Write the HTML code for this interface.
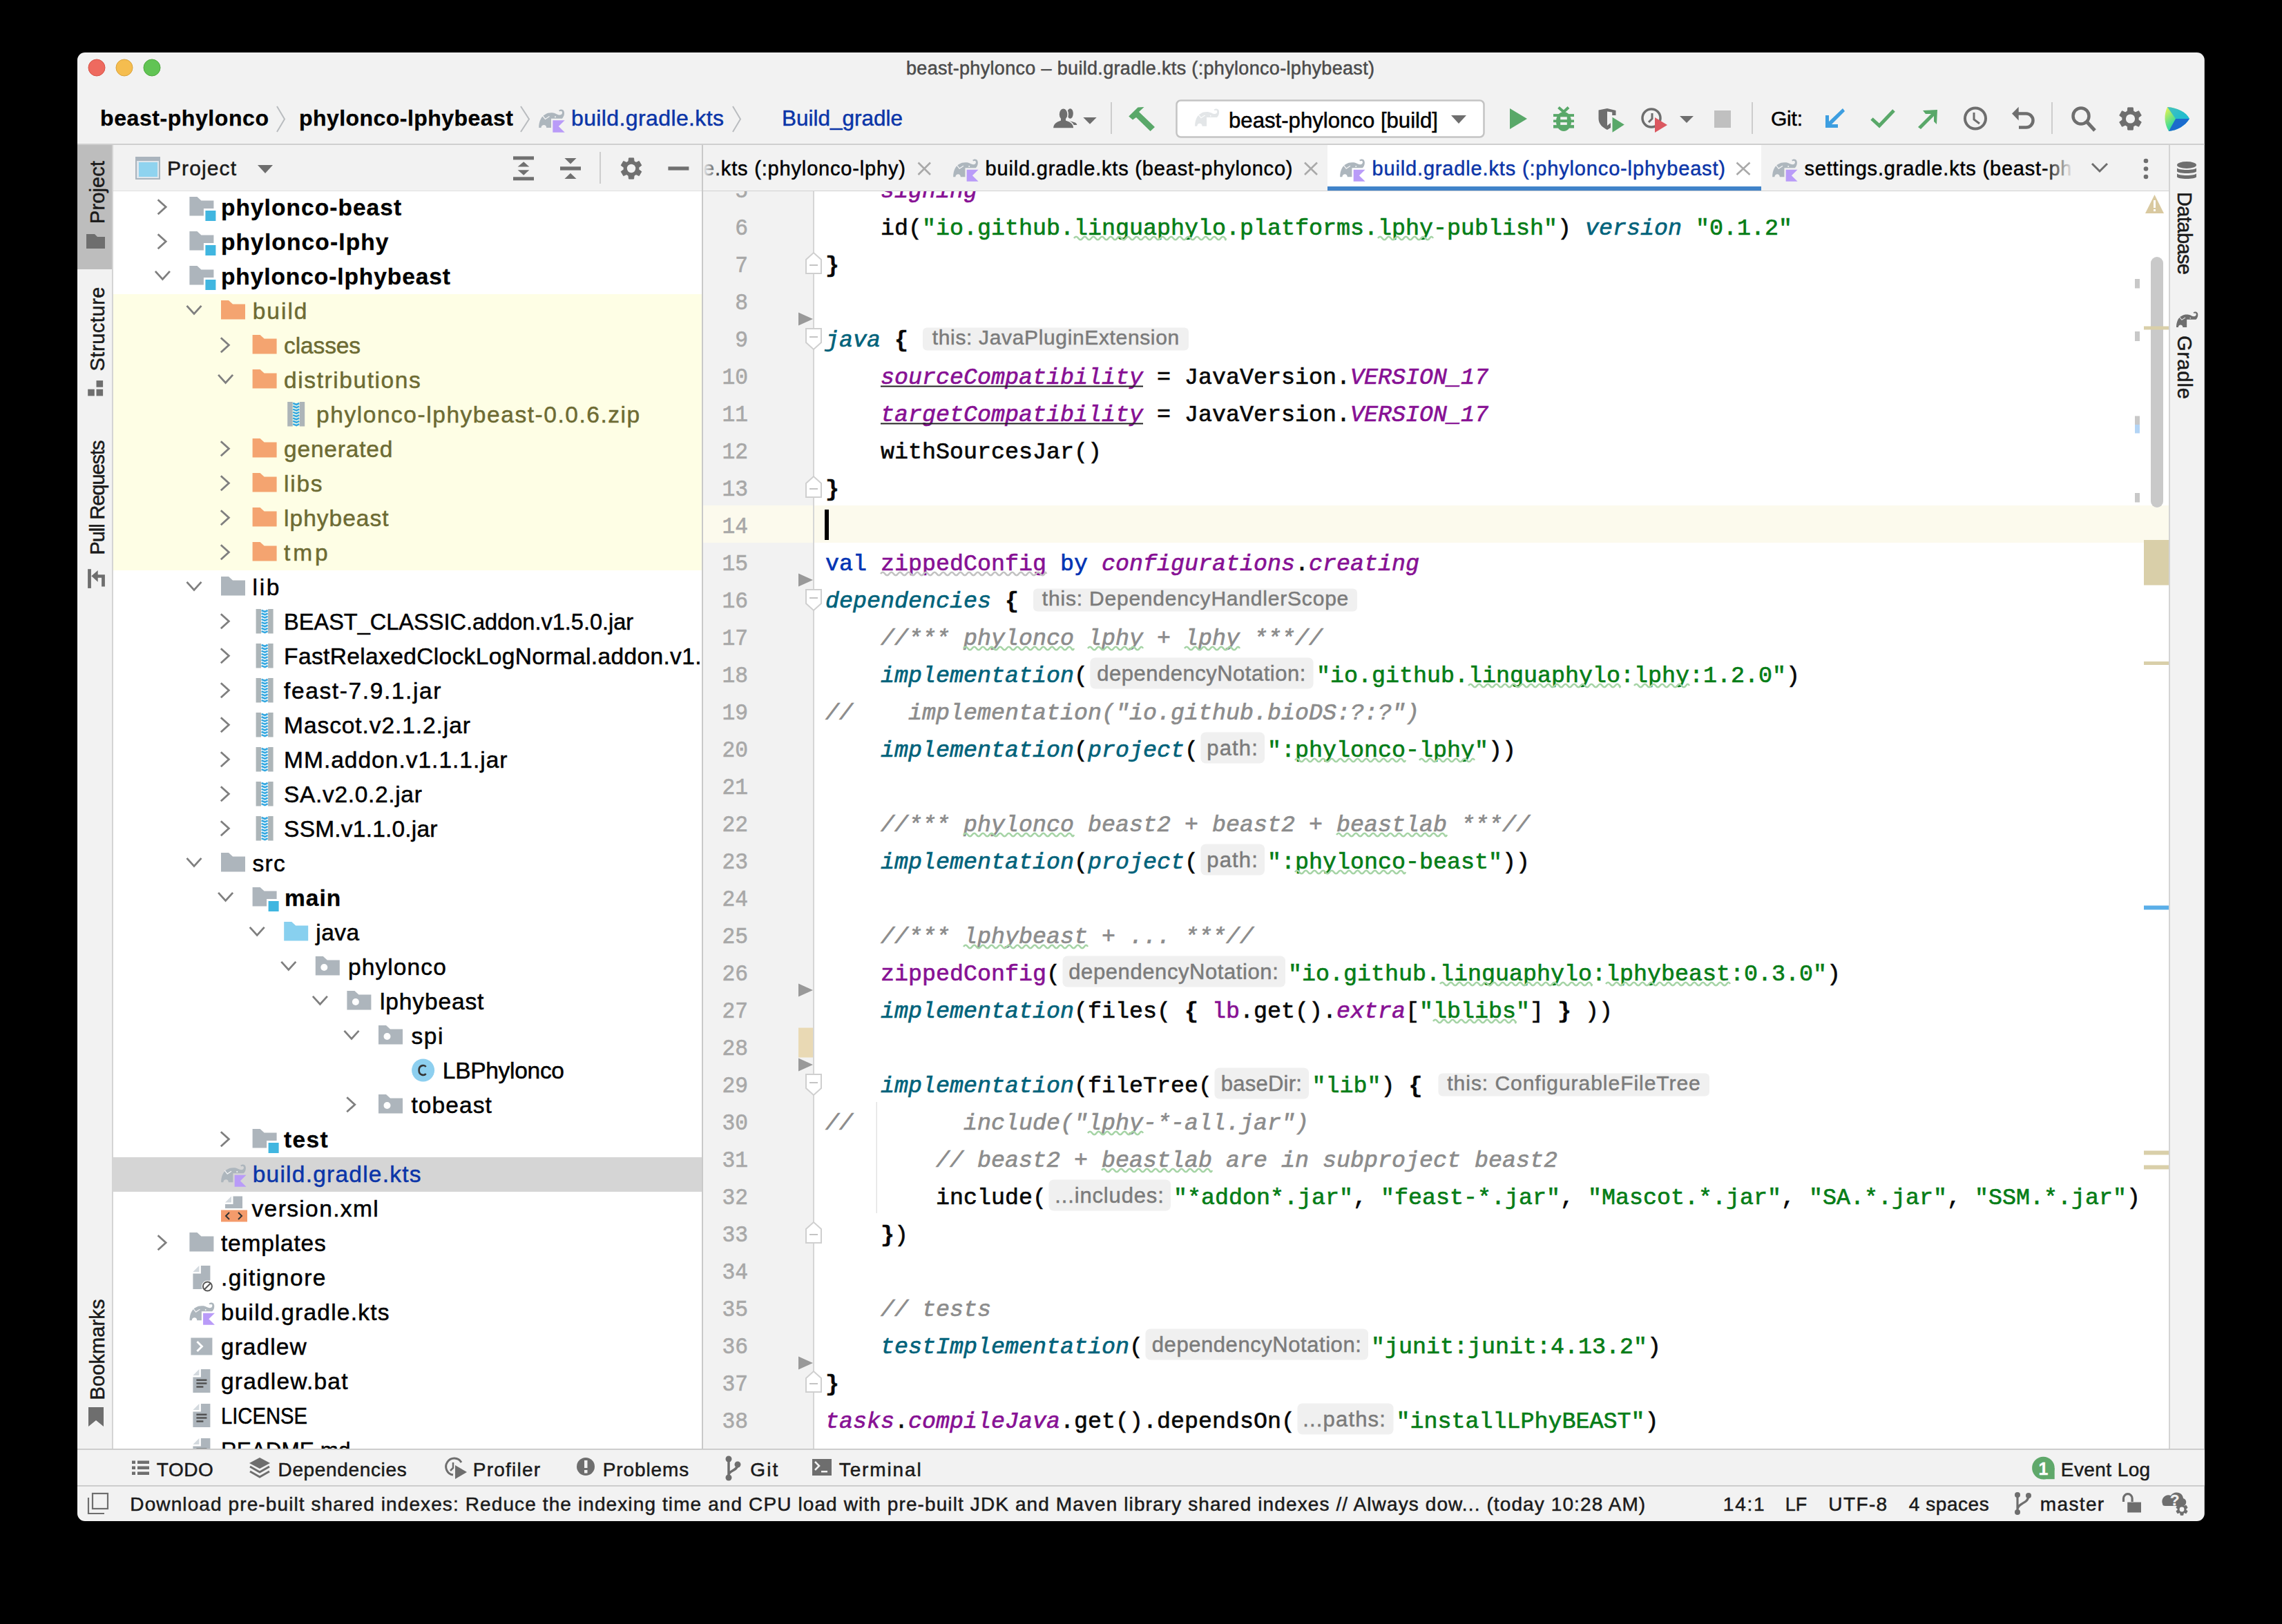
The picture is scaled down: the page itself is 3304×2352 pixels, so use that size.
<!DOCTYPE html><html><head><meta charset="utf-8"><style>html,body{margin:0;padding:0;background:#000;width:3304px;height:2352px;overflow:hidden}svg{display:block}text{white-space:pre}</style></head><body>
<svg width="3304" height="2352" viewBox="0 0 3304 2352">
<defs><clipPath id="win"><rect x="112" y="76" width="3079.8" height="2127" rx="11"/></clipPath><clipPath id="tree"><rect x="164" y="277" width="852" height="1821"/></clipPath><clipPath id="ed"><rect x="1018" y="277" width="2122" height="1821"/></clipPath><clipPath id="tabs"><rect x="1018" y="209" width="2122" height="67"/></clipPath><linearGradient id="fadeL" x1="0" x2="1"><stop offset="0" stop-color="#f2f2f2" stop-opacity="1"/><stop offset="1" stop-color="#f2f2f2" stop-opacity="0"/></linearGradient><linearGradient id="fadeR" x1="0" x2="1"><stop offset="0" stop-color="#f2f2f2" stop-opacity="0"/><stop offset="1" stop-color="#f2f2f2" stop-opacity="1"/></linearGradient></defs>
<rect x="0" y="0" width="3304" height="2352" fill="#000"/>
<g clip-path="url(#win)">
<rect x="112" y="76" width="3080" height="2127" fill="#f2f2f2" />
<circle cx="140" cy="98" r="12" fill="#ee6a5f" stroke="#d65448" stroke-width="1"/>
<circle cx="180" cy="98" r="12" fill="#f5bd4f" stroke="#d9a23b" stroke-width="1"/>
<circle cx="220" cy="98" r="12" fill="#61c454" stroke="#4ea83f" stroke-width="1"/>
<text x="1312" y="108" font-size="27" fill="#4b4b4b" stroke="#4b4b4b" stroke-width="0.5" font-family='"Liberation Sans",sans-serif' textLength="678" lengthAdjust="spacing" >beast-phylonco – build.gradle.kts (:phylonco-lphybeast)</text>
<rect x="112" y="208" width="3080" height="2" fill="#cfcfcf" />
<text x="145" y="181.5" font-size="32" fill="#000" stroke="#000" stroke-width="0.3" font-family='"Liberation Sans",sans-serif' font-weight="bold" textLength="244" lengthAdjust="spacing" >beast-phylonco</text>
<path d="M401,154 L412,172.5 L401,191" stroke="#b9bcbf" stroke-width="2" fill="none"/>
<text x="433" y="181.5" font-size="32" fill="#000" stroke="#000" stroke-width="0.3" font-family='"Liberation Sans",sans-serif' font-weight="bold" textLength="310" lengthAdjust="spacing" >phylonco-lphybeast</text>
<path d="M754,154 L766,172.5 L754,191" stroke="#b9bcbf" stroke-width="2" fill="none"/>
<g transform="translate(779,158) scale(1.0)" opacity="1">
<path d="M1.2,27 C1,18 5,10 10,8 C13,5.5 18,5 22,5.5 C26,6 28,8.5 31,8.5 C34,8.5 35,7 35,5 C35,3 33,2.5 31.5,3.5 L30,2 C32,0 36,-0.3 37.5,3 C39,7 37,12 34.7,13.7 L19,13.7 L19,27 L12.2,27 C12.2,24.5 10.5,23 8.5,23 C6.5,23 4.5,24.5 4.5,27 Z" fill="#adb6bd"/>
<path d="M6.5,9.5 L10.5,14.5 L16.5,10.5" stroke="#fff" stroke-width="1.3" fill="none" opacity="0.85"/>
<circle cx="25" cy="11.3" r="1" fill="#fff" opacity="0.85"/>
<path d="M21.3,16.2 L38.7,16.2 L29.8,25 L38.7,33.7 L21.3,33.7 Z" fill="#b99bf8"/>
</g>
<text x="827" y="181.5" font-size="32" fill="#0b35a8" stroke="#0b35a8" stroke-width="0.5" font-family='"Liberation Sans",sans-serif' textLength="221" lengthAdjust="spacing" >build.gradle.kts</text>
<path d="M1061,154 L1072,172.5 L1061,191" stroke="#b9bcbf" stroke-width="2" fill="none"/>
<text x="1132" y="181.5" font-size="32" fill="#0b35a8" stroke="#0b35a8" stroke-width="0.5" font-family='"Liberation Sans",sans-serif' textLength="175" lengthAdjust="spacingAndGlyphs" >Build_gradle</text>
<g fill="#6e6e6e"><ellipse cx="1549.5" cy="164.5" rx="4.3" ry="7.3"/><path d="M1546,175 C1552,176 1559.3,177 1559.3,181 L1550,181 Z"/></g>
<g fill="#6e6e6e" stroke="#f2f2f2" stroke-width="1.6"><ellipse cx="1539.6" cy="165.5" rx="6.6" ry="8.8"/><path d="M1524.3,186 C1524.3,178 1530,176 1535.5,174 L1543.5,174 C1549,176 1554.9,178 1554.9,186 Z"/></g>
<rect x="1536" y="172" width="7" height="4" fill="#6e6e6e" />
<path d="M1568.3,170 L1587.7,170 L1578.0,179.7 Z" fill="#6e6e6e"/>
<rect x="1608" y="148" width="2" height="46" fill="#cdcdcd" />
<path d="M1634.2,168.5 L1647.5,155.5 L1656.5,155 L1649,162 L1672,184 L1665.5,190 L1645,170 L1640,173.5 Z" fill="#59a869"/>
<rect x="1703.5" y="145.5" width="445" height="53" rx="6" fill="#fff" stroke="#c4c4c4" stroke-width="2.5"/>
<g transform="translate(1729,157) scale(0.95)" opacity="1">
<path d="M1.2,27 C1,18 5,10 10,8 C13,5.5 18,5 22,5.5 C26,6 28,8.5 31,8.5 C34,8.5 35,7 35,5 C35,3 33,2.5 31.5,3.5 L30,2 C32,0 36,-0.3 37.5,3 C39,7 37,12 34.7,13.7 L19,13.7 L19,27 L12.2,27 C12.2,24.5 10.5,23 8.5,23 C6.5,23 4.5,24.5 4.5,27 Z" fill="#e3e6e8"/>
<path d="M6.5,9.5 L10.5,14.5 L16.5,10.5" stroke="#fff" stroke-width="1.3" fill="none" opacity="0.85"/>
<circle cx="25" cy="11.3" r="1" fill="#fff" opacity="0.85"/>
</g>
<text x="1779" y="185" font-size="32" fill="#000" stroke="#000" stroke-width="0.5" font-family='"Liberation Sans",sans-serif' textLength="303" lengthAdjust="spacingAndGlyphs" >beast-phylonco [build]</text>
<path d="M2101,167 L2123,167 L2112.0,179 Z" fill="#6e6e6e"/>
<path d="M2186,157 L2211,172 L2186,187 Z" fill="#59a869"/>
<g stroke="#59a869" stroke-width="4" fill="none"><path d="M2256.5,155.5 L2264,162 L2271,155.5"/></g>
<ellipse cx="2264" cy="176" rx="11" ry="14" fill="#59a869"/>
<rect x="2249" y="165.1" width="30" height="3.9000000000000057" fill="#59a869" />
<rect x="2249" y="173.5" width="30" height="3.6999999999999886" fill="#59a869" />
<rect x="2249" y="181.1" width="30" height="4.5" fill="#59a869" />
<rect x="2259.2" y="169.3" width="9.6" height="3.9" fill="#f2f2f2" />
<rect x="2259.2" y="177.2" width="9.6" height="3.7" fill="#f2f2f2" />
<path d="M2314.5,159.5 L2327,157 L2339.5,160 L2339.5,167 L2334.2,167 L2334.2,162.5 L2327,161.5 L2327,182 L2332,178 L2332,185 L2327,188 C2321,185 2314.5,180 2314.5,172 Z" fill="#6e6e6e"/>
<path d="M2334.5,169.8 L2351.8,180.6 L2334.5,191.7 Z" fill="#59a869"/>
<circle cx="2391" cy="171" r="13" fill="none" stroke="#6e6e6e" stroke-width="3.5"/>
<path d="M2392,164 L2392,172 L2387,177" stroke="#6e6e6e" stroke-width="3" fill="none"/>
<path d="M2396,170 L2414,181 L2396,192 Z" fill="#db5860"/>
<path d="M2432,168 L2452,168 L2442.0,178 Z" fill="#6e6e6e"/>
<rect x="2482" y="160" width="24" height="25" fill="#c0c0c0" />
<rect x="2536" y="148" width="2" height="46" fill="#cdcdcd" />
<text x="2564" y="182" font-size="30" fill="#000" stroke="#000" stroke-width="0.5" font-family='"Liberation Sans",sans-serif' textLength="46" lengthAdjust="spacing" >Git:</text>
<g fill="#3d9ee0"><path d="M2668,157 L2671,161 L2652,180 L2661,180 L2661,185 L2643,185 L2643,167 L2648,167 L2648,176 Z"/></g>
<path d="M2710,172 L2721,182 L2742,160" stroke="#59a869" stroke-width="5" fill="none"/>
<g fill="#59a869"><path d="M2777,184 L2796,165 L2788,165 L2784,160 L2805,159 L2804,180 L2800,176 L2800,168 L2781,187 Z"/></g>
<circle cx="2860" cy="171.5" r="15" fill="none" stroke="#6e6e6e" stroke-width="4"/>
<path d="M2858,163 L2858,173 L2866,179" stroke="#6e6e6e" stroke-width="3" fill="none"/>
<path d="M2922,164.5 L2933.5,164.5 A10,10 0 0 1 2933.5,184.5 L2923,184.5" stroke="#6e6e6e" stroke-width="4.5" fill="none"/>
<path d="M2913,164.6 L2922.7,154.8 L2922.7,174.5 Z" fill="#6e6e6e"/>
<rect x="2970" y="148" width="2" height="46" fill="#cdcdcd" />
<circle cx="3013" cy="168" r="11.5" fill="none" stroke="#6e6e6e" stroke-width="4.5"/>
<path d="M3021,176 L3033,189" stroke="#6e6e6e" stroke-width="5"/>
<polygon points="3080.2,161.3 3080.8,155.9 3088.2,155.9 3088.8,161.3 3091.6,162.9 3096.6,160.7 3100.3,167.2 3095.9,170.4 3095.9,173.6 3100.3,176.8 3096.6,183.3 3091.6,181.1 3088.8,182.7 3088.2,188.1 3080.8,188.1 3080.2,182.7 3077.4,181.1 3072.4,183.3 3068.7,176.8 3073.1,173.6 3073.1,170.4 3068.7,167.2 3072.4,160.7 3077.4,162.9" fill="#6e6e6e" stroke="#6e6e6e" stroke-width="1" stroke-linejoin="round"/>
<circle cx="3084.5" cy="172" r="11.879999999999999" fill="#6e6e6e"/>
<circle cx="3084.5" cy="172" r="6.6000000000000005" fill="#f2f2f2"/>
<defs><linearGradient id="jb1" x1="0" y1="0" x2="1" y2="1"><stop offset="0" stop-color="#f8f549"/><stop offset="0.5" stop-color="#3ddc97"/><stop offset="1" stop-color="#07c3f2"/></linearGradient><linearGradient id="jb2" x1="0" y1="0" x2="1" y2="1"><stop offset="0" stop-color="#21d789"/><stop offset="1" stop-color="#087cfa"/></linearGradient></defs>
<path d="M3138,155 C3152,156 3165,162 3170,172 C3164,182 3152,189 3140,190 C3133,178 3133,166 3138,155 Z" fill="url(#jb1)"/>
<path d="M3138,155 C3152,156 3165,162 3170,172 L3150,172 Z" fill="#1fb5d8" opacity="0.8"/>
<path d="M3170,172 C3164,182 3152,189 3140,190 L3150,172 Z" fill="#1a5fd0" opacity="0.9"/>
<rect x="112" y="210" width="50" height="180" fill="#bdbdbd" />
<rect x="162" y="210" width="2" height="1888" fill="#d4d4d4" />
<text transform="translate(151,324) rotate(-90)" x="0" y="0" font-size="29" fill="#1a1a1a" stroke="#1a1a1a" stroke-width="0.5" font-family='"Liberation Sans",sans-serif' textLength="91" lengthAdjust="spacing">Project</text>
<path d="M125,339 L137,339 L141,343 L152,343 L152,360 L125,360 Z" fill="#6e6e6e"/>
<text transform="translate(151,537.5) rotate(-90)" x="0" y="0" font-size="29" fill="#1a1a1a" stroke="#1a1a1a" stroke-width="0.5" font-family='"Liberation Sans",sans-serif' textLength="122" lengthAdjust="spacing">Structure</text>
<g fill="#6e6e6e"><rect x="127.2" y="563.7" width="9.6" height="9.7"/><rect x="139.5" y="563.7" width="9.6" height="9.7"/><rect x="139.5" y="551.1" width="9.6" height="9.6"/></g>
<text transform="translate(151,803.5) rotate(-90)" x="0" y="0" font-size="29" fill="#1a1a1a" stroke="#1a1a1a" stroke-width="0.5" font-family='"Liberation Sans",sans-serif' textLength="166" lengthAdjust="spacing">Pull Requests</text>
<g fill="#6e6e6e"><rect x="127.1" y="824.2" width="4.8" height="27.7"/><path d="M132.3,834.3 L141.7,826 L141.7,832.2 L151.9,832.2 L151.9,849.6 L147.1,849.6 L147.1,836.8 L141.7,836.8 L141.7,842.8 Z"/></g>
<text transform="translate(151,2027.5) rotate(-90)" x="0" y="0" font-size="29" fill="#1a1a1a" stroke="#1a1a1a" stroke-width="0.5" font-family='"Liberation Sans",sans-serif' textLength="146" lengthAdjust="spacing">Bookmarks</text>
<path d="M128,2038 L150,2038 L150,2066 L139,2057 L128,2066 Z" fill="#6e6e6e"/>
<rect x="3140" y="210" width="2" height="1888" fill="#d4d4d4" />
<g fill="#6e6e6e"><ellipse cx="3166" cy="239" rx="14" ry="5"/><path d="M3152,243 C3152,247 3180,247 3180,243 L3180,248 C3180,252 3152,252 3152,248 Z"/><path d="M3152,251 C3152,255 3180,255 3180,251 L3180,256 C3180,260 3152,260 3152,256 Z"/></g>
<text transform="translate(3153,278) rotate(90)" x="0" y="0" font-size="29" fill="#1a1a1a" stroke="#1a1a1a" stroke-width="0.5" font-family='"Liberation Sans",sans-serif' textLength="120" lengthAdjust="spacing">Database</text>
<g transform="translate(3150,451) scale(0.85)" opacity="1">
<path d="M1.2,27 C1,18 5,10 10,8 C13,5.5 18,5 22,5.5 C26,6 28,8.5 31,8.5 C34,8.5 35,7 35,5 C35,3 33,2.5 31.5,3.5 L30,2 C32,0 36,-0.3 37.5,3 C39,7 37,12 34.7,13.7 L19,13.7 L19,27 L12.2,27 C12.2,24.5 10.5,23 8.5,23 C6.5,23 4.5,24.5 4.5,27 Z" fill="#6e6e6e"/>
<path d="M6.5,9.5 L10.5,14.5 L16.5,10.5" stroke="#f2f2f2" stroke-width="1.3" fill="none" opacity="0.85"/>
<circle cx="25" cy="11.3" r="1" fill="#f2f2f2" opacity="0.85"/>
</g>
<text transform="translate(3153,486) rotate(90)" x="0" y="0" font-size="29" fill="#1a1a1a" stroke="#1a1a1a" stroke-width="0.5" font-family='"Liberation Sans",sans-serif' textLength="92" lengthAdjust="spacing">Gradle</text>
<rect x="164" y="210" width="852" height="66" fill="#f2f2f2" />
<rect x="164" y="276.4" width="852" height="2" fill="#d4d4d4" />
<rect x="197" y="228" width="34" height="31" fill="#dfe6ec" stroke="#aab4bd" stroke-width="2"/>
<rect x="197" y="227" width="35" height="6" fill="#aab4bd" />
<rect x="201" y="235" width="27" height="21" fill="#8fd3ef" />
<text x="242" y="253.5" font-size="30" fill="#1a1a1a" stroke="#1a1a1a" stroke-width="0.5" font-family='"Liberation Sans",sans-serif' textLength="100" lengthAdjust="spacing" >Project</text>
<path d="M373,239 L395,239 L384.0,251 Z" fill="#6e6e6e"/>
<g fill="#707070"><rect x="743" y="226.4" width="30" height="5"/><rect x="743" y="256.3" width="30" height="5"/><path d="M749.6,241.6 L758.2,234.3 L766.3,241.6 Z"/><path d="M749.6,246.2 L758.2,253.7 L766.3,246.2 Z"/><rect x="811" y="241.3" width="30" height="5.3"/><path d="M817.4,229 L834.5,229 L826,237.4 Z"/><path d="M817.4,259 L834.5,259 L826,250.8 Z"/></g>
<rect x="868" y="220" width="2" height="46" fill="#cdcdcd" />
<polygon points="909.9,233.9 910.5,228.9 917.5,228.9 918.1,233.9 920.7,235.5 925.3,233.4 928.8,239.5 924.7,242.5 924.7,245.5 928.8,248.5 925.3,254.6 920.7,252.5 918.1,254.1 917.5,259.1 910.5,259.1 909.9,254.1 907.3,252.5 902.7,254.6 899.2,248.5 903.3,245.5 903.3,242.5 899.2,239.5 902.7,233.4 907.3,235.5" fill="#707070" stroke="#707070" stroke-width="1" stroke-linejoin="round"/>
<circle cx="914" cy="244" r="11.16" fill="#707070"/>
<circle cx="914" cy="244" r="6.2" fill="#f2f2f2"/>
<rect x="967.4" y="241.3" width="30" height="5.3" fill="#707070" />
<rect x="164" y="277" width="852" height="1821" fill="#ffffff" />
<g clip-path="url(#tree)">
<rect x="164" y="426" width="852" height="400" fill="#fefee5" />
<rect x="164" y="1676" width="852" height="50" fill="#d5d5d5" />
<path d="M228.62499999999997,289.3 L240.17499999999998,299.8 L228.62499999999997,310.3" stroke="#7f7f7f" stroke-width="2.8" fill="none"/>
<path d="M274.4,285 L285.4,285 L291.4,290.5 L309.4,290.5 L309.4,302 L294.9,302 L294.9,312.5 L274.4,312.5 Z" fill="#adb5bc"/>
<rect x="297.4" y="305" width="15" height="15" fill="#40b6e0" />
<text x="319.9" y="311.8" font-size="33.5" fill="#000" stroke="#000" stroke-width="0.3" font-family='"Liberation Sans",sans-serif' font-weight="bold" textLength="261.2" lengthAdjust="spacing" >phylonco-beast</text>
<path d="M228.62499999999997,339.3 L240.17499999999998,349.8 L228.62499999999997,360.3" stroke="#7f7f7f" stroke-width="2.8" fill="none"/>
<path d="M274.4,335 L285.4,335 L291.4,340.5 L309.4,340.5 L309.4,352 L294.9,352 L294.9,362.5 L274.4,362.5 Z" fill="#adb5bc"/>
<rect x="297.4" y="355" width="15" height="15" fill="#40b6e0" />
<text x="319.9" y="361.8" font-size="33.5" fill="#000" stroke="#000" stroke-width="0.3" font-family='"Liberation Sans",sans-serif' font-weight="bold" textLength="242.6" lengthAdjust="spacing" >phylonco-lphy</text>
<path d="M224.89999999999998,392.82500000000005 L235.39999999999998,404.375 L245.89999999999998,392.82500000000005" stroke="#7f7f7f" stroke-width="2.8" fill="none"/>
<path d="M274.4,385 L285.4,385 L291.4,390.5 L309.4,390.5 L309.4,402 L294.9,402 L294.9,412.5 L274.4,412.5 Z" fill="#adb5bc"/>
<rect x="297.4" y="405" width="15" height="15" fill="#40b6e0" />
<text x="319.9" y="411.8" font-size="33.5" fill="#000" stroke="#000" stroke-width="0.3" font-family='"Liberation Sans",sans-serif' font-weight="bold" textLength="332.1" lengthAdjust="spacing" >phylonco-lphybeast</text>
<path d="M270.5,442.82500000000005 L281.0,454.375 L291.5,442.82500000000005" stroke="#7f7f7f" stroke-width="2.8" fill="none"/>
<path d="M320.0,435 L331.0,435 L337.0,440.5 L355.0,440.5 L355.0,462.5 L320.0,462.5 Z" fill="#f4a470"/>
<text x="365.7" y="461.8" font-size="33.5" fill="#6d6b33" stroke="#6d6b33" stroke-width="0.5" font-family='"Liberation Sans",sans-serif' textLength="78.8" lengthAdjust="spacing" >build</text>
<path d="M319.825,489.3 L331.37499999999994,499.8 L319.825,510.3" stroke="#7f7f7f" stroke-width="2.8" fill="none"/>
<path d="M365.59999999999997,485 L376.59999999999997,485 L382.59999999999997,490.5 L400.59999999999997,490.5 L400.59999999999997,512.5 L365.59999999999997,512.5 Z" fill="#f4a470"/>
<text x="411.1" y="511.8" font-size="33.5" fill="#6d6b33" stroke="#6d6b33" stroke-width="0.5" font-family='"Liberation Sans",sans-serif' textLength="111.0" lengthAdjust="spacing" >classes</text>
<path d="M316.09999999999997,542.825 L326.59999999999997,554.375 L337.09999999999997,542.825" stroke="#7f7f7f" stroke-width="2.8" fill="none"/>
<path d="M365.59999999999997,535 L376.59999999999997,535 L382.59999999999997,540.5 L400.59999999999997,540.5 L400.59999999999997,562.5 L365.59999999999997,562.5 Z" fill="#f4a470"/>
<text x="411.1" y="561.8" font-size="33.5" fill="#6d6b33" stroke="#6d6b33" stroke-width="0.5" font-family='"Liberation Sans",sans-serif' textLength="197.6" lengthAdjust="spacing" >distributions</text>
<rect x="416.2" y="582" width="7.5" height="35.5" fill="#adb5b8" />
<rect x="433.7" y="582" width="7.5" height="35.5" fill="#adb5b8" />
<path d="M424.2,584.0 L429.2,586.0 L433.2,584.0" stroke="#35a8e0" stroke-width="2.6" fill="none"/>
<path d="M424.2,588.3 L429.2,590.3 L433.2,588.3" stroke="#35a8e0" stroke-width="2.6" fill="none"/>
<path d="M424.2,592.6 L429.2,594.6 L433.2,592.6" stroke="#35a8e0" stroke-width="2.6" fill="none"/>
<path d="M424.2,596.9 L429.2,598.9 L433.2,596.9" stroke="#35a8e0" stroke-width="2.6" fill="none"/>
<path d="M424.2,601.2 L429.2,603.2 L433.2,601.2" stroke="#35a8e0" stroke-width="2.6" fill="none"/>
<path d="M424.2,605.5 L429.2,607.5 L433.2,605.5" stroke="#35a8e0" stroke-width="2.6" fill="none"/>
<path d="M424.2,609.8 L429.2,611.8 L433.2,609.8" stroke="#35a8e0" stroke-width="2.6" fill="none"/>
<path d="M424.2,614.1 L429.2,616.1 L433.2,614.1" stroke="#35a8e0" stroke-width="2.6" fill="none"/>
<text x="458.1" y="611.8" font-size="33.5" fill="#6d6b33" stroke="#6d6b33" stroke-width="0.5" font-family='"Liberation Sans",sans-serif' textLength="468.1" lengthAdjust="spacing" >phylonco-lphybeast-0.0.6.zip</text>
<path d="M319.825,639.3 L331.37499999999994,649.8 L319.825,660.3" stroke="#7f7f7f" stroke-width="2.8" fill="none"/>
<path d="M365.59999999999997,635 L376.59999999999997,635 L382.59999999999997,640.5 L400.59999999999997,640.5 L400.59999999999997,662.5 L365.59999999999997,662.5 Z" fill="#f4a470"/>
<text x="411.1" y="661.8" font-size="33.5" fill="#6d6b33" stroke="#6d6b33" stroke-width="0.5" font-family='"Liberation Sans",sans-serif' textLength="157.2" lengthAdjust="spacing" >generated</text>
<path d="M319.825,689.3 L331.37499999999994,699.8 L319.825,710.3" stroke="#7f7f7f" stroke-width="2.8" fill="none"/>
<path d="M365.59999999999997,685 L376.59999999999997,685 L382.59999999999997,690.5 L400.59999999999997,690.5 L400.59999999999997,712.5 L365.59999999999997,712.5 Z" fill="#f4a470"/>
<text x="411.1" y="711.8" font-size="33.5" fill="#6d6b33" stroke="#6d6b33" stroke-width="0.5" font-family='"Liberation Sans",sans-serif' textLength="55.4" lengthAdjust="spacing" >libs</text>
<path d="M319.825,739.3 L331.37499999999994,749.8 L319.825,760.3" stroke="#7f7f7f" stroke-width="2.8" fill="none"/>
<path d="M365.59999999999997,735 L376.59999999999997,735 L382.59999999999997,740.5 L400.59999999999997,740.5 L400.59999999999997,762.5 L365.59999999999997,762.5 Z" fill="#f4a470"/>
<text x="411.1" y="761.8" font-size="33.5" fill="#6d6b33" stroke="#6d6b33" stroke-width="0.5" font-family='"Liberation Sans",sans-serif' textLength="151.4" lengthAdjust="spacing" >lphybeast</text>
<path d="M319.825,789.3 L331.37499999999994,799.8 L319.825,810.3" stroke="#7f7f7f" stroke-width="2.8" fill="none"/>
<path d="M365.59999999999997,785 L376.59999999999997,785 L382.59999999999997,790.5 L400.59999999999997,790.5 L400.59999999999997,812.5 L365.59999999999997,812.5 Z" fill="#f4a470"/>
<text x="411.1" y="811.8" font-size="33.5" fill="#6d6b33" stroke="#6d6b33" stroke-width="0.5" font-family='"Liberation Sans",sans-serif' textLength="63.6" lengthAdjust="spacing" >tmp</text>
<path d="M270.5,842.825 L281.0,854.375 L291.5,842.825" stroke="#7f7f7f" stroke-width="2.8" fill="none"/>
<path d="M320.0,835 L331.0,835 L337.0,840.5 L355.0,840.5 L355.0,862.5 L320.0,862.5 Z" fill="#adb5bc"/>
<text x="365.5" y="861.8" font-size="33.5" fill="#000" stroke="#000" stroke-width="0.5" font-family='"Liberation Sans",sans-serif' textLength="39" lengthAdjust="spacing" >lib</text>
<path d="M319.825,889.3 L331.37499999999994,899.8 L319.825,910.3" stroke="#7f7f7f" stroke-width="2.8" fill="none"/>
<rect x="370.59999999999997" y="882" width="7.5" height="35.5" fill="#adb5b8" />
<rect x="388.09999999999997" y="882" width="7.5" height="35.5" fill="#adb5b8" />
<path d="M378.59999999999997,884.0 L383.59999999999997,886.0 L387.59999999999997,884.0" stroke="#35a8e0" stroke-width="2.6" fill="none"/>
<path d="M378.59999999999997,888.3 L383.59999999999997,890.3 L387.59999999999997,888.3" stroke="#35a8e0" stroke-width="2.6" fill="none"/>
<path d="M378.59999999999997,892.6 L383.59999999999997,894.6 L387.59999999999997,892.6" stroke="#35a8e0" stroke-width="2.6" fill="none"/>
<path d="M378.59999999999997,896.9 L383.59999999999997,898.9 L387.59999999999997,896.9" stroke="#35a8e0" stroke-width="2.6" fill="none"/>
<path d="M378.59999999999997,901.2 L383.59999999999997,903.2 L387.59999999999997,901.2" stroke="#35a8e0" stroke-width="2.6" fill="none"/>
<path d="M378.59999999999997,905.5 L383.59999999999997,907.5 L387.59999999999997,905.5" stroke="#35a8e0" stroke-width="2.6" fill="none"/>
<path d="M378.59999999999997,909.8 L383.59999999999997,911.8 L387.59999999999997,909.8" stroke="#35a8e0" stroke-width="2.6" fill="none"/>
<path d="M378.59999999999997,914.1 L383.59999999999997,916.1 L387.59999999999997,914.1" stroke="#35a8e0" stroke-width="2.6" fill="none"/>
<text x="411.1" y="911.8" font-size="33.5" fill="#000" stroke="#000" stroke-width="0.5" font-family='"Liberation Sans",sans-serif' textLength="506.1" lengthAdjust="spacingAndGlyphs" >BEAST_CLASSIC.addon.v1.5.0.jar</text>
<path d="M319.825,939.3 L331.37499999999994,949.8 L319.825,960.3" stroke="#7f7f7f" stroke-width="2.8" fill="none"/>
<rect x="370.59999999999997" y="932" width="7.5" height="35.5" fill="#adb5b8" />
<rect x="388.09999999999997" y="932" width="7.5" height="35.5" fill="#adb5b8" />
<path d="M378.59999999999997,934.0 L383.59999999999997,936.0 L387.59999999999997,934.0" stroke="#35a8e0" stroke-width="2.6" fill="none"/>
<path d="M378.59999999999997,938.3 L383.59999999999997,940.3 L387.59999999999997,938.3" stroke="#35a8e0" stroke-width="2.6" fill="none"/>
<path d="M378.59999999999997,942.6 L383.59999999999997,944.6 L387.59999999999997,942.6" stroke="#35a8e0" stroke-width="2.6" fill="none"/>
<path d="M378.59999999999997,946.9 L383.59999999999997,948.9 L387.59999999999997,946.9" stroke="#35a8e0" stroke-width="2.6" fill="none"/>
<path d="M378.59999999999997,951.2 L383.59999999999997,953.2 L387.59999999999997,951.2" stroke="#35a8e0" stroke-width="2.6" fill="none"/>
<path d="M378.59999999999997,955.5 L383.59999999999997,957.5 L387.59999999999997,955.5" stroke="#35a8e0" stroke-width="2.6" fill="none"/>
<path d="M378.59999999999997,959.8 L383.59999999999997,961.8 L387.59999999999997,959.8" stroke="#35a8e0" stroke-width="2.6" fill="none"/>
<path d="M378.59999999999997,964.1 L383.59999999999997,966.1 L387.59999999999997,964.1" stroke="#35a8e0" stroke-width="2.6" fill="none"/>
<text x="411.1" y="961.8" font-size="33.5" fill="#000" stroke="#000" stroke-width="0.5" font-family='"Liberation Sans",sans-serif' textLength="604.4" lengthAdjust="spacing" >FastRelaxedClockLogNormal.addon.v1.</text>
<path d="M319.825,989.3 L331.37499999999994,999.8 L319.825,1010.3" stroke="#7f7f7f" stroke-width="2.8" fill="none"/>
<rect x="370.59999999999997" y="982" width="7.5" height="35.5" fill="#adb5b8" />
<rect x="388.09999999999997" y="982" width="7.5" height="35.5" fill="#adb5b8" />
<path d="M378.59999999999997,984.0 L383.59999999999997,986.0 L387.59999999999997,984.0" stroke="#35a8e0" stroke-width="2.6" fill="none"/>
<path d="M378.59999999999997,988.3 L383.59999999999997,990.3 L387.59999999999997,988.3" stroke="#35a8e0" stroke-width="2.6" fill="none"/>
<path d="M378.59999999999997,992.6 L383.59999999999997,994.6 L387.59999999999997,992.6" stroke="#35a8e0" stroke-width="2.6" fill="none"/>
<path d="M378.59999999999997,996.9 L383.59999999999997,998.9 L387.59999999999997,996.9" stroke="#35a8e0" stroke-width="2.6" fill="none"/>
<path d="M378.59999999999997,1001.2 L383.59999999999997,1003.2 L387.59999999999997,1001.2" stroke="#35a8e0" stroke-width="2.6" fill="none"/>
<path d="M378.59999999999997,1005.5 L383.59999999999997,1007.5 L387.59999999999997,1005.5" stroke="#35a8e0" stroke-width="2.6" fill="none"/>
<path d="M378.59999999999997,1009.8 L383.59999999999997,1011.8 L387.59999999999997,1009.8" stroke="#35a8e0" stroke-width="2.6" fill="none"/>
<path d="M378.59999999999997,1014.1 L383.59999999999997,1016.1 L387.59999999999997,1014.1" stroke="#35a8e0" stroke-width="2.6" fill="none"/>
<text x="411.1" y="1011.8" font-size="33.5" fill="#000" stroke="#000" stroke-width="0.5" font-family='"Liberation Sans",sans-serif' textLength="227.4" lengthAdjust="spacing" >feast-7.9.1.jar</text>
<path d="M319.825,1039.3 L331.37499999999994,1049.8 L319.825,1060.3" stroke="#7f7f7f" stroke-width="2.8" fill="none"/>
<rect x="370.59999999999997" y="1032" width="7.5" height="35.5" fill="#adb5b8" />
<rect x="388.09999999999997" y="1032" width="7.5" height="35.5" fill="#adb5b8" />
<path d="M378.59999999999997,1034.0 L383.59999999999997,1036.0 L387.59999999999997,1034.0" stroke="#35a8e0" stroke-width="2.6" fill="none"/>
<path d="M378.59999999999997,1038.3 L383.59999999999997,1040.3 L387.59999999999997,1038.3" stroke="#35a8e0" stroke-width="2.6" fill="none"/>
<path d="M378.59999999999997,1042.6 L383.59999999999997,1044.6 L387.59999999999997,1042.6" stroke="#35a8e0" stroke-width="2.6" fill="none"/>
<path d="M378.59999999999997,1046.9 L383.59999999999997,1048.9 L387.59999999999997,1046.9" stroke="#35a8e0" stroke-width="2.6" fill="none"/>
<path d="M378.59999999999997,1051.2 L383.59999999999997,1053.2 L387.59999999999997,1051.2" stroke="#35a8e0" stroke-width="2.6" fill="none"/>
<path d="M378.59999999999997,1055.5 L383.59999999999997,1057.5 L387.59999999999997,1055.5" stroke="#35a8e0" stroke-width="2.6" fill="none"/>
<path d="M378.59999999999997,1059.8 L383.59999999999997,1061.8 L387.59999999999997,1059.8" stroke="#35a8e0" stroke-width="2.6" fill="none"/>
<path d="M378.59999999999997,1064.1 L383.59999999999997,1066.1 L387.59999999999997,1064.1" stroke="#35a8e0" stroke-width="2.6" fill="none"/>
<text x="411.1" y="1061.8" font-size="33.5" fill="#000" stroke="#000" stroke-width="0.5" font-family='"Liberation Sans",sans-serif' textLength="269.8" lengthAdjust="spacing" >Mascot.v2.1.2.jar</text>
<path d="M319.825,1089.3 L331.37499999999994,1099.8 L319.825,1110.3" stroke="#7f7f7f" stroke-width="2.8" fill="none"/>
<rect x="370.59999999999997" y="1082" width="7.5" height="35.5" fill="#adb5b8" />
<rect x="388.09999999999997" y="1082" width="7.5" height="35.5" fill="#adb5b8" />
<path d="M378.59999999999997,1084.0 L383.59999999999997,1086.0 L387.59999999999997,1084.0" stroke="#35a8e0" stroke-width="2.6" fill="none"/>
<path d="M378.59999999999997,1088.3 L383.59999999999997,1090.3 L387.59999999999997,1088.3" stroke="#35a8e0" stroke-width="2.6" fill="none"/>
<path d="M378.59999999999997,1092.6 L383.59999999999997,1094.6 L387.59999999999997,1092.6" stroke="#35a8e0" stroke-width="2.6" fill="none"/>
<path d="M378.59999999999997,1096.9 L383.59999999999997,1098.9 L387.59999999999997,1096.9" stroke="#35a8e0" stroke-width="2.6" fill="none"/>
<path d="M378.59999999999997,1101.2 L383.59999999999997,1103.2 L387.59999999999997,1101.2" stroke="#35a8e0" stroke-width="2.6" fill="none"/>
<path d="M378.59999999999997,1105.5 L383.59999999999997,1107.5 L387.59999999999997,1105.5" stroke="#35a8e0" stroke-width="2.6" fill="none"/>
<path d="M378.59999999999997,1109.8 L383.59999999999997,1111.8 L387.59999999999997,1109.8" stroke="#35a8e0" stroke-width="2.6" fill="none"/>
<path d="M378.59999999999997,1114.1 L383.59999999999997,1116.1 L387.59999999999997,1114.1" stroke="#35a8e0" stroke-width="2.6" fill="none"/>
<text x="411.1" y="1111.8" font-size="33.5" fill="#000" stroke="#000" stroke-width="0.5" font-family='"Liberation Sans",sans-serif' textLength="323.4" lengthAdjust="spacing" >MM.addon.v1.1.1.jar</text>
<path d="M319.825,1139.3 L331.37499999999994,1149.8 L319.825,1160.3" stroke="#7f7f7f" stroke-width="2.8" fill="none"/>
<rect x="370.59999999999997" y="1132" width="7.5" height="35.5" fill="#adb5b8" />
<rect x="388.09999999999997" y="1132" width="7.5" height="35.5" fill="#adb5b8" />
<path d="M378.59999999999997,1134.0 L383.59999999999997,1136.0 L387.59999999999997,1134.0" stroke="#35a8e0" stroke-width="2.6" fill="none"/>
<path d="M378.59999999999997,1138.3 L383.59999999999997,1140.3 L387.59999999999997,1138.3" stroke="#35a8e0" stroke-width="2.6" fill="none"/>
<path d="M378.59999999999997,1142.6 L383.59999999999997,1144.6 L387.59999999999997,1142.6" stroke="#35a8e0" stroke-width="2.6" fill="none"/>
<path d="M378.59999999999997,1146.9 L383.59999999999997,1148.9 L387.59999999999997,1146.9" stroke="#35a8e0" stroke-width="2.6" fill="none"/>
<path d="M378.59999999999997,1151.2 L383.59999999999997,1153.2 L387.59999999999997,1151.2" stroke="#35a8e0" stroke-width="2.6" fill="none"/>
<path d="M378.59999999999997,1155.5 L383.59999999999997,1157.5 L387.59999999999997,1155.5" stroke="#35a8e0" stroke-width="2.6" fill="none"/>
<path d="M378.59999999999997,1159.8 L383.59999999999997,1161.8 L387.59999999999997,1159.8" stroke="#35a8e0" stroke-width="2.6" fill="none"/>
<path d="M378.59999999999997,1164.1 L383.59999999999997,1166.1 L387.59999999999997,1164.1" stroke="#35a8e0" stroke-width="2.6" fill="none"/>
<text x="411.1" y="1161.8" font-size="33.5" fill="#000" stroke="#000" stroke-width="0.5" font-family='"Liberation Sans",sans-serif' textLength="199.7" lengthAdjust="spacing" >SA.v2.0.2.jar</text>
<path d="M319.825,1189.3 L331.37499999999994,1199.8 L319.825,1210.3" stroke="#7f7f7f" stroke-width="2.8" fill="none"/>
<rect x="370.59999999999997" y="1182" width="7.5" height="35.5" fill="#adb5b8" />
<rect x="388.09999999999997" y="1182" width="7.5" height="35.5" fill="#adb5b8" />
<path d="M378.59999999999997,1184.0 L383.59999999999997,1186.0 L387.59999999999997,1184.0" stroke="#35a8e0" stroke-width="2.6" fill="none"/>
<path d="M378.59999999999997,1188.3 L383.59999999999997,1190.3 L387.59999999999997,1188.3" stroke="#35a8e0" stroke-width="2.6" fill="none"/>
<path d="M378.59999999999997,1192.6 L383.59999999999997,1194.6 L387.59999999999997,1192.6" stroke="#35a8e0" stroke-width="2.6" fill="none"/>
<path d="M378.59999999999997,1196.9 L383.59999999999997,1198.9 L387.59999999999997,1196.9" stroke="#35a8e0" stroke-width="2.6" fill="none"/>
<path d="M378.59999999999997,1201.2 L383.59999999999997,1203.2 L387.59999999999997,1201.2" stroke="#35a8e0" stroke-width="2.6" fill="none"/>
<path d="M378.59999999999997,1205.5 L383.59999999999997,1207.5 L387.59999999999997,1205.5" stroke="#35a8e0" stroke-width="2.6" fill="none"/>
<path d="M378.59999999999997,1209.8 L383.59999999999997,1211.8 L387.59999999999997,1209.8" stroke="#35a8e0" stroke-width="2.6" fill="none"/>
<path d="M378.59999999999997,1214.1 L383.59999999999997,1216.1 L387.59999999999997,1214.1" stroke="#35a8e0" stroke-width="2.6" fill="none"/>
<text x="411.1" y="1211.8" font-size="33.5" fill="#000" stroke="#000" stroke-width="0.5" font-family='"Liberation Sans",sans-serif' textLength="222.4" lengthAdjust="spacing" >SSM.v1.1.0.jar</text>
<path d="M270.5,1242.8249999999998 L281.0,1254.375 L291.5,1242.8249999999998" stroke="#7f7f7f" stroke-width="2.8" fill="none"/>
<path d="M320.0,1235 L331.0,1235 L337.0,1240.5 L355.0,1240.5 L355.0,1262.5 L320.0,1262.5 Z" fill="#adb5bc"/>
<text x="365.5" y="1261.8" font-size="33.5" fill="#000" stroke="#000" stroke-width="0.5" font-family='"Liberation Sans",sans-serif' textLength="47.3" lengthAdjust="spacing" >src</text>
<path d="M316.09999999999997,1292.8249999999998 L326.59999999999997,1304.375 L337.09999999999997,1292.8249999999998" stroke="#7f7f7f" stroke-width="2.8" fill="none"/>
<path d="M365.59999999999997,1285 L376.59999999999997,1285 L382.59999999999997,1290.5 L400.59999999999997,1290.5 L400.59999999999997,1302 L386.09999999999997,1302 L386.09999999999997,1312.5 L365.59999999999997,1312.5 Z" fill="#adb5bc"/>
<rect x="388.59999999999997" y="1305" width="15" height="15" fill="#40b6e0" />
<text x="411.9" y="1311.8" font-size="33.5" fill="#000" stroke="#000" stroke-width="0.3" font-family='"Liberation Sans",sans-serif' font-weight="bold" textLength="81.4" lengthAdjust="spacing" >main</text>
<path d="M361.7,1342.8249999999998 L372.2,1354.375 L382.7,1342.8249999999998" stroke="#7f7f7f" stroke-width="2.8" fill="none"/>
<path d="M411.2,1335 L422.2,1335 L428.2,1340.5 L446.2,1340.5 L446.2,1362.5 L411.2,1362.5 Z" fill="#88d0ef"/>
<text x="457.3" y="1361.8" font-size="33.5" fill="#000" stroke="#000" stroke-width="0.5" font-family='"Liberation Sans",sans-serif' textLength="62.8" lengthAdjust="spacing" >java</text>
<path d="M407.29999999999995,1392.8249999999998 L417.79999999999995,1404.375 L428.29999999999995,1392.8249999999998" stroke="#7f7f7f" stroke-width="2.8" fill="none"/>
<path d="M456.79999999999995,1385 L467.79999999999995,1385 L473.79999999999995,1390.5 L491.79999999999995,1390.5 L491.79999999999995,1412.5 L456.79999999999995,1412.5 Z" fill="#adb5bc"/>
<circle cx="469.29999999999995" cy="1401" r="5" fill="#fff"/>
<text x="503.9" y="1411.8" font-size="33.5" fill="#000" stroke="#000" stroke-width="0.5" font-family='"Liberation Sans",sans-serif' textLength="141.9" lengthAdjust="spacing" >phylonco</text>
<path d="M452.9,1442.8249999999998 L463.4,1454.375 L473.9,1442.8249999999998" stroke="#7f7f7f" stroke-width="2.8" fill="none"/>
<path d="M502.4,1435 L513.4,1435 L519.4,1440.5 L537.4,1440.5 L537.4,1462.5 L502.4,1462.5 Z" fill="#adb5bc"/>
<circle cx="514.9" cy="1451" r="5" fill="#fff"/>
<text x="550.0" y="1461.8" font-size="33.5" fill="#000" stroke="#000" stroke-width="0.5" font-family='"Liberation Sans",sans-serif' textLength="150.3" lengthAdjust="spacing" >lphybeast</text>
<path d="M498.5,1492.8249999999998 L509.0,1504.375 L519.5,1492.8249999999998" stroke="#7f7f7f" stroke-width="2.8" fill="none"/>
<path d="M548.0,1485 L559.0,1485 L565.0,1490.5 L583.0,1490.5 L583.0,1512.5 L548.0,1512.5 Z" fill="#adb5bc"/>
<circle cx="560.5" cy="1501" r="5" fill="#fff"/>
<text x="595.5" y="1511.8" font-size="33.5" fill="#000" stroke="#000" stroke-width="0.5" font-family='"Liberation Sans",sans-serif' textLength="46" lengthAdjust="spacing" >spi</text>
<circle cx="612.5999999999999" cy="1550" r="16.5" fill="#8dcfef"/>
<path d="M616.5999999999999,1545 C614.5999999999999,1542 606.5999999999999,1542 606.5999999999999,1550 C606.5999999999999,1558 614.5999999999999,1558 616.5999999999999,1555" stroke="#333" stroke-width="2.6" fill="none"/>
<text x="640.8" y="1561.8" font-size="33.5" fill="#000" stroke="#000" stroke-width="0.5" font-family='"Liberation Sans",sans-serif' textLength="176.2" lengthAdjust="spacing" >LBPhylonco</text>
<path d="M502.225,1589.3 L513.775,1599.8 L502.225,1610.3" stroke="#7f7f7f" stroke-width="2.8" fill="none"/>
<path d="M548.0,1585 L559.0,1585 L565.0,1590.5 L583.0,1590.5 L583.0,1612.5 L548.0,1612.5 Z" fill="#adb5bc"/>
<circle cx="560.5" cy="1601" r="5" fill="#fff"/>
<text x="595.5" y="1611.8" font-size="33.5" fill="#000" stroke="#000" stroke-width="0.5" font-family='"Liberation Sans",sans-serif' textLength="116.3" lengthAdjust="spacing" >tobeast</text>
<path d="M319.825,1639.3 L331.37499999999994,1649.8 L319.825,1660.3" stroke="#7f7f7f" stroke-width="2.8" fill="none"/>
<path d="M365.59999999999997,1635 L376.59999999999997,1635 L382.59999999999997,1640.5 L400.59999999999997,1640.5 L400.59999999999997,1652 L386.09999999999997,1652 L386.09999999999997,1662.5 L365.59999999999997,1662.5 Z" fill="#adb5bc"/>
<rect x="388.59999999999997" y="1655" width="15" height="15" fill="#40b6e0" />
<text x="411.1" y="1661.8" font-size="33.5" fill="#000" stroke="#000" stroke-width="0.3" font-family='"Liberation Sans",sans-serif' font-weight="bold" textLength="63.6" lengthAdjust="spacing" >test</text>
<g transform="translate(319.0,1686) scale(0.97)" opacity="1">
<path d="M1.2,27 C1,18 5,10 10,8 C13,5.5 18,5 22,5.5 C26,6 28,8.5 31,8.5 C34,8.5 35,7 35,5 C35,3 33,2.5 31.5,3.5 L30,2 C32,0 36,-0.3 37.5,3 C39,7 37,12 34.7,13.7 L19,13.7 L19,27 L12.2,27 C12.2,24.5 10.5,23 8.5,23 C6.5,23 4.5,24.5 4.5,27 Z" fill="#adb6bd"/>
<path d="M6.5,9.5 L10.5,14.5 L16.5,10.5" stroke="#fff" stroke-width="1.3" fill="none" opacity="0.85"/>
<circle cx="25" cy="11.3" r="1" fill="#fff" opacity="0.85"/>
<path d="M21.3,16.2 L38.7,16.2 L29.8,25 L38.7,33.7 L21.3,33.7 Z" fill="#b99bf8"/>
</g>
<text x="365.7" y="1711.8" font-size="33.5" fill="#0b35a8" stroke="#0b35a8" stroke-width="0.5" font-family='"Liberation Sans",sans-serif' textLength="243.8" lengthAdjust="spacing" >build.gradle.kts</text>
<path d="M326.0,1741.5 L335.0,1732.5 L335.0,1741.5 Z" fill="#d3d9de"/>
<path d="M337.5,1732.5 L351.0,1732.5 L351.0,1750 L326.0,1750 L326.0,1744 L337.5,1744 Z" fill="#adb5bc"/>
<rect x="320.0" y="1752.5" width="38" height="17" fill="#f49b6b" />
<path d="M332.0,1756 L327.0,1761 L332.0,1766 M345.0,1756 L350.0,1761 L345.0,1766" stroke="#333" stroke-width="2" fill="none"/>
<text x="364.5" y="1761.8" font-size="33.5" fill="#000" stroke="#000" stroke-width="0.5" font-family='"Liberation Sans",sans-serif' textLength="183.2" lengthAdjust="spacing" >version.xml</text>
<path d="M228.62499999999997,1789.3 L240.17499999999998,1799.8 L228.62499999999997,1810.3" stroke="#7f7f7f" stroke-width="2.8" fill="none"/>
<path d="M274.4,1785 L285.4,1785 L291.4,1790.5 L309.4,1790.5 L309.4,1812.5 L274.4,1812.5 Z" fill="#adb5bc"/>
<text x="319.9" y="1811.8" font-size="33.5" fill="#000" stroke="#000" stroke-width="0.5" font-family='"Liberation Sans",sans-serif' textLength="151.9" lengthAdjust="spacing" >templates</text>
<path d="M279.4,1842 L288.4,1833 L288.4,1842 Z" fill="#d3d9de"/>
<path d="M290.9,1833 L304.4,1833 L304.4,1854 L292.4,1867 L279.4,1867 L279.4,1844.5 L290.9,1844.5 Z" fill="#adb5bc"/>
<circle cx="300.4" cy="1863" r="8.5" fill="#fff"/><circle cx="300.4" cy="1863" r="6.5" fill="none" stroke="#555" stroke-width="2"/><path d="M295.9,1867.5 L304.9,1858.5" stroke="#555" stroke-width="2"/>
<text x="319.9" y="1861.8" font-size="33.5" fill="#000" stroke="#000" stroke-width="0.5" font-family='"Liberation Sans",sans-serif' textLength="151.6" lengthAdjust="spacing" >.gitignore</text>
<g transform="translate(273.4,1886) scale(0.97)" opacity="1">
<path d="M1.2,27 C1,18 5,10 10,8 C13,5.5 18,5 22,5.5 C26,6 28,8.5 31,8.5 C34,8.5 35,7 35,5 C35,3 33,2.5 31.5,3.5 L30,2 C32,0 36,-0.3 37.5,3 C39,7 37,12 34.7,13.7 L19,13.7 L19,27 L12.2,27 C12.2,24.5 10.5,23 8.5,23 C6.5,23 4.5,24.5 4.5,27 Z" fill="#adb6bd"/>
<path d="M6.5,9.5 L10.5,14.5 L16.5,10.5" stroke="#fff" stroke-width="1.3" fill="none" opacity="0.85"/>
<circle cx="25" cy="11.3" r="1" fill="#fff" opacity="0.85"/>
<path d="M21.3,16.2 L38.7,16.2 L29.8,25 L38.7,33.7 L21.3,33.7 Z" fill="#b99bf8"/>
</g>
<text x="319.9" y="1911.8" font-size="33.5" fill="#000" stroke="#000" stroke-width="0.5" font-family='"Liberation Sans",sans-serif' textLength="243.5" lengthAdjust="spacing" >build.gradle.kts</text>
<rect x="276.4" y="1937.5" width="31" height="25" fill="#adb5bc" />
<path d="M285.4,1943 L292.4,1950 L285.4,1957" stroke="#fff" stroke-width="3" fill="none"/>
<text x="319.9" y="1961.8" font-size="33.5" fill="#000" stroke="#000" stroke-width="0.5" font-family='"Liberation Sans",sans-serif' textLength="123.9" lengthAdjust="spacing" >gradlew</text>
<path d="M279.4,1992 L288.4,1983 L288.4,1992 Z" fill="#d3d9de"/>
<path d="M290.9,1983 L304.4,1983 L304.4,2017 L279.4,2017 L279.4,1994.5 L290.9,1994.5 Z" fill="#adb5bc"/>
<rect x="284.4" y="1997.5" width="15" height="2.4" fill="#4f4f4f" />
<rect x="284.4" y="2002.3" width="15" height="2.4" fill="#4f4f4f" />
<rect x="284.4" y="2007.3" width="10" height="2.4" fill="#4f4f4f" />
<text x="319.9" y="2011.8" font-size="33.5" fill="#000" stroke="#000" stroke-width="0.5" font-family='"Liberation Sans",sans-serif' textLength="183.6" lengthAdjust="spacing" >gradlew.bat</text>
<path d="M279.4,2042 L288.4,2033 L288.4,2042 Z" fill="#d3d9de"/>
<path d="M290.9,2033 L304.4,2033 L304.4,2067 L279.4,2067 L279.4,2044.5 L290.9,2044.5 Z" fill="#adb5bc"/>
<rect x="284.4" y="2047.5" width="15" height="2.4" fill="#4f4f4f" />
<rect x="284.4" y="2052.3" width="15" height="2.4" fill="#4f4f4f" />
<rect x="284.4" y="2057.3" width="10" height="2.4" fill="#4f4f4f" />
<text x="319.9" y="2061.8" font-size="33.5" fill="#000" stroke="#000" stroke-width="0.5" font-family='"Liberation Sans",sans-serif' textLength="125.1" lengthAdjust="spacingAndGlyphs" >LICENSE</text>
<path d="M279.4,2092 L288.4,2083 L288.4,2092 Z" fill="#d3d9de"/>
<path d="M290.9,2083 L304.4,2083 L304.4,2117 L279.4,2117 L279.4,2094.5 L290.9,2094.5 Z" fill="#adb5bc"/>
<rect x="284.4" y="2097.5" width="15" height="2.4" fill="#4f4f4f" />
<rect x="284.4" y="2102.3" width="15" height="2.4" fill="#4f4f4f" />
<rect x="284.4" y="2107.3" width="10" height="2.4" fill="#4f4f4f" />
<text x="319.9" y="2111.8" font-size="33.5" fill="#000" stroke="#000" stroke-width="0.5" font-family='"Liberation Sans",sans-serif' textLength="187.6" lengthAdjust="spacingAndGlyphs" >README.md</text>
</g>
<rect x="1016" y="210" width="2" height="1888" fill="#c9c9c9" />
<rect x="1018" y="210" width="2122" height="66" fill="#f2f2f2" />
<rect x="1018" y="276" width="2122" height="1.5" fill="#d1d1d1" />
<g clip-path="url(#tabs)">
<text x="1018" y="254" font-size="29" fill="#000" stroke="#000" stroke-width="0.5" font-family='"Liberation Sans",sans-serif' textLength="293" lengthAdjust="spacing" >e.kts (:phylonco-lphy)</text>
<rect x="1018" y="225" width="28" height="40" fill="url(#fadeL)" />
<path d="M1329.5,235.5 L1347,253 M1347,235.5 L1329.5,253" stroke="#a9a9a9" stroke-width="2.6"/>
<g transform="translate(1379,230) scale(0.97)" opacity="1">
<path d="M1.2,27 C1,18 5,10 10,8 C13,5.5 18,5 22,5.5 C26,6 28,8.5 31,8.5 C34,8.5 35,7 35,5 C35,3 33,2.5 31.5,3.5 L30,2 C32,0 36,-0.3 37.5,3 C39,7 37,12 34.7,13.7 L19,13.7 L19,27 L12.2,27 C12.2,24.5 10.5,23 8.5,23 C6.5,23 4.5,24.5 4.5,27 Z" fill="#adb6bd"/>
<path d="M6.5,9.5 L10.5,14.5 L16.5,10.5" stroke="#fff" stroke-width="1.3" fill="none" opacity="0.85"/>
<circle cx="25" cy="11.3" r="1" fill="#fff" opacity="0.85"/>
<path d="M21.3,16.2 L38.7,16.2 L29.8,25 L38.7,33.7 L21.3,33.7 Z" fill="#b99bf8"/>
</g>
<text x="1426.5" y="254" font-size="29" fill="#000" stroke="#000" stroke-width="0.5" font-family='"Liberation Sans",sans-serif' textLength="445" lengthAdjust="spacing" >build.gradle.kts (beast-phylonco)</text>
<path d="M1889,235.5 L1907,253 M1907,235.5 L1889,253" stroke="#a9a9a9" stroke-width="2.6"/>
<rect x="1922" y="210" width="628" height="66" fill="#ffffff" />
<rect x="1922" y="270" width="628" height="6" fill="#4083c9" />
<g transform="translate(1939,230) scale(0.97)" opacity="1">
<path d="M1.2,27 C1,18 5,10 10,8 C13,5.5 18,5 22,5.5 C26,6 28,8.5 31,8.5 C34,8.5 35,7 35,5 C35,3 33,2.5 31.5,3.5 L30,2 C32,0 36,-0.3 37.5,3 C39,7 37,12 34.7,13.7 L19,13.7 L19,27 L12.2,27 C12.2,24.5 10.5,23 8.5,23 C6.5,23 4.5,24.5 4.5,27 Z" fill="#adb6bd"/>
<path d="M6.5,9.5 L10.5,14.5 L16.5,10.5" stroke="#fff" stroke-width="1.3" fill="none" opacity="0.85"/>
<circle cx="25" cy="11.3" r="1" fill="#fff" opacity="0.85"/>
<path d="M21.3,16.2 L38.7,16.2 L29.8,25 L38.7,33.7 L21.3,33.7 Z" fill="#b99bf8"/>
</g>
<text x="1986.5" y="254" font-size="29" fill="#0b35a8" stroke="#0b35a8" stroke-width="0.5" font-family='"Liberation Sans",sans-serif' textLength="511.5" lengthAdjust="spacing" >build.gradle.kts (:phylonco-lphybeast)</text>
<path d="M2514.5,235.5 L2533.5,253 M2533.5,235.5 L2514.5,253" stroke="#a9a9a9" stroke-width="2.6"/>
<g transform="translate(2565,230) scale(0.97)" opacity="1">
<path d="M1.2,27 C1,18 5,10 10,8 C13,5.5 18,5 22,5.5 C26,6 28,8.5 31,8.5 C34,8.5 35,7 35,5 C35,3 33,2.5 31.5,3.5 L30,2 C32,0 36,-0.3 37.5,3 C39,7 37,12 34.7,13.7 L19,13.7 L19,27 L12.2,27 C12.2,24.5 10.5,23 8.5,23 C6.5,23 4.5,24.5 4.5,27 Z" fill="#adb6bd"/>
<path d="M6.5,9.5 L10.5,14.5 L16.5,10.5" stroke="#fff" stroke-width="1.3" fill="none" opacity="0.85"/>
<circle cx="25" cy="11.3" r="1" fill="#fff" opacity="0.85"/>
<path d="M21.3,16.2 L38.7,16.2 L29.8,25 L38.7,33.7 L21.3,33.7 Z" fill="#b99bf8"/>
</g>
<text x="2612.5" y="254" font-size="29" fill="#000" stroke="#000" stroke-width="0.5" font-family='"Liberation Sans",sans-serif' textLength="387" lengthAdjust="spacing" >settings.gradle.kts (beast-ph</text>
<rect x="2960" y="222" width="42" height="44" fill="url(#fadeR)" />
<path d="M3029,237 L3040,248 L3051,237" stroke="#6e6e6e" stroke-width="3" fill="none"/>
<g fill="#6e6e6e"><circle cx="3107" cy="233" r="3.3"/><circle cx="3107" cy="244.5" r="3.3"/><circle cx="3107" cy="256" r="3.3"/></g>
</g>
<rect x="1018" y="277" width="159" height="1821" fill="#f2f2f2" />
<rect x="1179" y="277" width="1961" height="1821" fill="#ffffff" />
<g clip-path="url(#ed)">
<rect x="1018" y="732" width="2122" height="54" fill="#fcfaed" />
<rect x="1177" y="277" width="2" height="1821" fill="#d6d6d6" />
<text x="1083" y="286" font-size="33.33" fill="#a8a8a8" stroke="#a8a8a8" stroke-width="0.6" text-anchor="end" textLength="18.8" lengthAdjust="spacingAndGlyphs" font-family='"Liberation Mono",monospace'>5</text>
<text x="1083" y="340" font-size="33.33" fill="#a8a8a8" stroke="#a8a8a8" stroke-width="0.6" text-anchor="end" textLength="18.8" lengthAdjust="spacingAndGlyphs" font-family='"Liberation Mono",monospace'>6</text>
<text x="1083" y="394" font-size="33.33" fill="#a8a8a8" stroke="#a8a8a8" stroke-width="0.6" text-anchor="end" textLength="18.8" lengthAdjust="spacingAndGlyphs" font-family='"Liberation Mono",monospace'>7</text>
<text x="1083" y="448" font-size="33.33" fill="#a8a8a8" stroke="#a8a8a8" stroke-width="0.6" text-anchor="end" textLength="18.8" lengthAdjust="spacingAndGlyphs" font-family='"Liberation Mono",monospace'>8</text>
<text x="1083" y="502" font-size="33.33" fill="#a8a8a8" stroke="#a8a8a8" stroke-width="0.6" text-anchor="end" textLength="18.8" lengthAdjust="spacingAndGlyphs" font-family='"Liberation Mono",monospace'>9</text>
<text x="1083" y="556" font-size="33.33" fill="#a8a8a8" stroke="#a8a8a8" stroke-width="0.6" text-anchor="end" textLength="37.6" lengthAdjust="spacingAndGlyphs" font-family='"Liberation Mono",monospace'>10</text>
<text x="1083" y="610" font-size="33.33" fill="#a8a8a8" stroke="#a8a8a8" stroke-width="0.6" text-anchor="end" textLength="37.6" lengthAdjust="spacingAndGlyphs" font-family='"Liberation Mono",monospace'>11</text>
<text x="1083" y="664" font-size="33.33" fill="#a8a8a8" stroke="#a8a8a8" stroke-width="0.6" text-anchor="end" textLength="37.6" lengthAdjust="spacingAndGlyphs" font-family='"Liberation Mono",monospace'>12</text>
<text x="1083" y="718" font-size="33.33" fill="#a8a8a8" stroke="#a8a8a8" stroke-width="0.6" text-anchor="end" textLength="37.6" lengthAdjust="spacingAndGlyphs" font-family='"Liberation Mono",monospace'>13</text>
<text x="1083" y="772" font-size="33.33" fill="#a8a8a8" stroke="#a8a8a8" stroke-width="0.6" text-anchor="end" textLength="37.6" lengthAdjust="spacingAndGlyphs" font-family='"Liberation Mono",monospace'>14</text>
<text x="1083" y="826" font-size="33.33" fill="#a8a8a8" stroke="#a8a8a8" stroke-width="0.6" text-anchor="end" textLength="37.6" lengthAdjust="spacingAndGlyphs" font-family='"Liberation Mono",monospace'>15</text>
<text x="1083" y="880" font-size="33.33" fill="#a8a8a8" stroke="#a8a8a8" stroke-width="0.6" text-anchor="end" textLength="37.6" lengthAdjust="spacingAndGlyphs" font-family='"Liberation Mono",monospace'>16</text>
<text x="1083" y="934" font-size="33.33" fill="#a8a8a8" stroke="#a8a8a8" stroke-width="0.6" text-anchor="end" textLength="37.6" lengthAdjust="spacingAndGlyphs" font-family='"Liberation Mono",monospace'>17</text>
<text x="1083" y="988" font-size="33.33" fill="#a8a8a8" stroke="#a8a8a8" stroke-width="0.6" text-anchor="end" textLength="37.6" lengthAdjust="spacingAndGlyphs" font-family='"Liberation Mono",monospace'>18</text>
<text x="1083" y="1042" font-size="33.33" fill="#a8a8a8" stroke="#a8a8a8" stroke-width="0.6" text-anchor="end" textLength="37.6" lengthAdjust="spacingAndGlyphs" font-family='"Liberation Mono",monospace'>19</text>
<text x="1083" y="1096" font-size="33.33" fill="#a8a8a8" stroke="#a8a8a8" stroke-width="0.6" text-anchor="end" textLength="37.6" lengthAdjust="spacingAndGlyphs" font-family='"Liberation Mono",monospace'>20</text>
<text x="1083" y="1150" font-size="33.33" fill="#a8a8a8" stroke="#a8a8a8" stroke-width="0.6" text-anchor="end" textLength="37.6" lengthAdjust="spacingAndGlyphs" font-family='"Liberation Mono",monospace'>21</text>
<text x="1083" y="1204" font-size="33.33" fill="#a8a8a8" stroke="#a8a8a8" stroke-width="0.6" text-anchor="end" textLength="37.6" lengthAdjust="spacingAndGlyphs" font-family='"Liberation Mono",monospace'>22</text>
<text x="1083" y="1258" font-size="33.33" fill="#a8a8a8" stroke="#a8a8a8" stroke-width="0.6" text-anchor="end" textLength="37.6" lengthAdjust="spacingAndGlyphs" font-family='"Liberation Mono",monospace'>23</text>
<text x="1083" y="1312" font-size="33.33" fill="#a8a8a8" stroke="#a8a8a8" stroke-width="0.6" text-anchor="end" textLength="37.6" lengthAdjust="spacingAndGlyphs" font-family='"Liberation Mono",monospace'>24</text>
<text x="1083" y="1366" font-size="33.33" fill="#a8a8a8" stroke="#a8a8a8" stroke-width="0.6" text-anchor="end" textLength="37.6" lengthAdjust="spacingAndGlyphs" font-family='"Liberation Mono",monospace'>25</text>
<text x="1083" y="1420" font-size="33.33" fill="#a8a8a8" stroke="#a8a8a8" stroke-width="0.6" text-anchor="end" textLength="37.6" lengthAdjust="spacingAndGlyphs" font-family='"Liberation Mono",monospace'>26</text>
<text x="1083" y="1474" font-size="33.33" fill="#a8a8a8" stroke="#a8a8a8" stroke-width="0.6" text-anchor="end" textLength="37.6" lengthAdjust="spacingAndGlyphs" font-family='"Liberation Mono",monospace'>27</text>
<text x="1083" y="1528" font-size="33.33" fill="#a8a8a8" stroke="#a8a8a8" stroke-width="0.6" text-anchor="end" textLength="37.6" lengthAdjust="spacingAndGlyphs" font-family='"Liberation Mono",monospace'>28</text>
<text x="1083" y="1582" font-size="33.33" fill="#a8a8a8" stroke="#a8a8a8" stroke-width="0.6" text-anchor="end" textLength="37.6" lengthAdjust="spacingAndGlyphs" font-family='"Liberation Mono",monospace'>29</text>
<text x="1083" y="1636" font-size="33.33" fill="#a8a8a8" stroke="#a8a8a8" stroke-width="0.6" text-anchor="end" textLength="37.6" lengthAdjust="spacingAndGlyphs" font-family='"Liberation Mono",monospace'>30</text>
<text x="1083" y="1690" font-size="33.33" fill="#a8a8a8" stroke="#a8a8a8" stroke-width="0.6" text-anchor="end" textLength="37.6" lengthAdjust="spacingAndGlyphs" font-family='"Liberation Mono",monospace'>31</text>
<text x="1083" y="1744" font-size="33.33" fill="#a8a8a8" stroke="#a8a8a8" stroke-width="0.6" text-anchor="end" textLength="37.6" lengthAdjust="spacingAndGlyphs" font-family='"Liberation Mono",monospace'>32</text>
<text x="1083" y="1798" font-size="33.33" fill="#a8a8a8" stroke="#a8a8a8" stroke-width="0.6" text-anchor="end" textLength="37.6" lengthAdjust="spacingAndGlyphs" font-family='"Liberation Mono",monospace'>33</text>
<text x="1083" y="1852" font-size="33.33" fill="#a8a8a8" stroke="#a8a8a8" stroke-width="0.6" text-anchor="end" textLength="37.6" lengthAdjust="spacingAndGlyphs" font-family='"Liberation Mono",monospace'>34</text>
<text x="1083" y="1906" font-size="33.33" fill="#a8a8a8" stroke="#a8a8a8" stroke-width="0.6" text-anchor="end" textLength="37.6" lengthAdjust="spacingAndGlyphs" font-family='"Liberation Mono",monospace'>35</text>
<text x="1083" y="1960" font-size="33.33" fill="#a8a8a8" stroke="#a8a8a8" stroke-width="0.6" text-anchor="end" textLength="37.6" lengthAdjust="spacingAndGlyphs" font-family='"Liberation Mono",monospace'>36</text>
<text x="1083" y="2014" font-size="33.33" fill="#a8a8a8" stroke="#a8a8a8" stroke-width="0.6" text-anchor="end" textLength="37.6" lengthAdjust="spacingAndGlyphs" font-family='"Liberation Mono",monospace'>37</text>
<text x="1083" y="2068" font-size="33.33" fill="#a8a8a8" stroke="#a8a8a8" stroke-width="0.6" text-anchor="end" textLength="37.6" lengthAdjust="spacingAndGlyphs" font-family='"Liberation Mono",monospace'>38</text>
<path d="M1156,452.5 L1177,462 L1156,471.5 Z" fill="#999"/>
<path d="M1156,830.5 L1177,840 L1156,849.5 Z" fill="#999"/>
<path d="M1156,1424.5 L1177,1434 L1156,1443.5 Z" fill="#999"/>
<path d="M1156,1532.5 L1177,1542 L1156,1551.5 Z" fill="#999"/>
<path d="M1156,1964.5 L1177,1974 L1156,1983.5 Z" fill="#999"/>
<rect x="1156" y="1488.5" width="21" height="43" fill="#e9d9b4" />
<path d="M1167,476 L1189,476 L1189,496 L1178,506 L1167,496 Z" fill="#fff" stroke="#cfcfcf" stroke-width="2"/>
<path d="M1172,488 L1184,488" stroke="#c4c4c4" stroke-width="2"/>
<path d="M1167,854 L1189,854 L1189,874 L1178,884 L1167,874 Z" fill="#fff" stroke="#cfcfcf" stroke-width="2"/>
<path d="M1172,866 L1184,866" stroke="#c4c4c4" stroke-width="2"/>
<path d="M1167,1556 L1189,1556 L1189,1576 L1178,1586 L1167,1576 Z" fill="#fff" stroke="#cfcfcf" stroke-width="2"/>
<path d="M1172,1568 L1184,1568" stroke="#c4c4c4" stroke-width="2"/>
<path d="M1167,396 L1189,396 L1189,376 L1178,366 L1167,376 Z" fill="#fff" stroke="#cfcfcf" stroke-width="2"/>
<path d="M1172,384 L1184,384" stroke="#c4c4c4" stroke-width="2"/>
<path d="M1167,720 L1189,720 L1189,700 L1178,690 L1167,700 Z" fill="#fff" stroke="#cfcfcf" stroke-width="2"/>
<path d="M1172,708 L1184,708" stroke="#c4c4c4" stroke-width="2"/>
<path d="M1167,1800 L1189,1800 L1189,1780 L1178,1770 L1167,1780 Z" fill="#fff" stroke="#cfcfcf" stroke-width="2"/>
<path d="M1172,1788 L1184,1788" stroke="#c4c4c4" stroke-width="2"/>
<path d="M1167,2016 L1189,2016 L1189,1996 L1178,1986 L1167,1996 Z" fill="#fff" stroke="#cfcfcf" stroke-width="2"/>
<path d="M1172,2004 L1184,2004" stroke="#c4c4c4" stroke-width="2"/>
<rect x="1268.5" y="1596" width="1.5" height="161" fill="#e3e3e3" />
<rect x="1194" y="738" width="6" height="44" fill="#000" />
<text x="1275.0" y="286" font-size="33.33" fill="#871094" stroke="#871094" stroke-width="0.65" font-style="italic" font-family='"Liberation Mono",monospace'>signing</text>
<text x="1275.0" y="340" font-size="33.33" fill="#080808" stroke="#080808" stroke-width="0.65" font-family='"Liberation Mono",monospace'>id(</text>
<text x="1335.0" y="340" font-size="33.33" fill="#067d17" stroke="#067d17" stroke-width="0.65" font-family='"Liberation Mono",monospace'>&quot;io.github.linguaphylo.platforms.lphy-publish&quot;</text>
<text x="2255.0" y="340" font-size="33.33" fill="#080808" stroke="#080808" stroke-width="0.65" font-family='"Liberation Mono",monospace'>)</text>
<text x="2275.0" y="340" font-size="33.33" fill="#080808" stroke="#080808" stroke-width="0.65" font-family='"Liberation Mono",monospace'> </text>
<text x="2295.0" y="340" font-size="33.33" fill="#00627a" stroke="#00627a" stroke-width="0.65" font-style="italic" font-family='"Liberation Mono",monospace'>version</text>
<text x="2435.0" y="340" font-size="33.33" fill="#080808" stroke="#080808" stroke-width="0.65" font-family='"Liberation Mono",monospace'> </text>
<text x="2455.0" y="340" font-size="33.33" fill="#067d17" stroke="#067d17" stroke-width="0.65" font-family='"Liberation Mono",monospace'>&quot;0.1.2&quot;</text>
<path d="M1555.0,345 Q1558.125,340.4 1561.25,345 Q1564.375,349.6 1567.5,345 Q1570.625,340.4 1573.75,345 Q1576.875,349.6 1580.0,345 Q1583.125,340.4 1586.25,345 Q1589.375,349.6 1592.5,345 Q1595.625,340.4 1598.75,345 Q1601.875,349.6 1605.0,345 Q1608.125,340.4 1611.25,345 Q1614.375,349.6 1617.5,345 Q1620.625,340.4 1623.75,345 Q1626.875,349.6 1630.0,345 Q1633.125,340.4 1636.25,345 Q1639.375,349.6 1642.5,345 Q1645.625,340.4 1648.75,345 Q1651.875,349.6 1655.0,345 Q1658.125,340.4 1661.25,345 Q1664.375,349.6 1667.5,345 Q1670.625,340.4 1673.75,345 Q1676.875,349.6 1680.0,345 Q1683.125,340.4 1686.25,345 Q1689.375,349.6 1692.5,345 Q1695.625,340.4 1698.75,345 Q1701.875,349.6 1705.0,345 Q1708.125,340.4 1711.25,345 Q1714.375,349.6 1717.5,345 Q1720.625,340.4 1723.75,345 Q1726.875,349.6 1730.0,345 Q1733.125,340.4 1736.25,345 Q1739.375,349.6 1742.5,345 Q1745.625,340.4 1748.75,345 Q1751.875,349.6 1755.0,345 Q1758.125,340.4 1761.25,345 Q1764.375,349.6 1767.5,345 Q1770.625,340.4 1773.75,345 Q1774.375,349.6 1775.0,345" stroke="#a6d4a6" stroke-width="2.6" fill="none"/>
<path d="M1995.0,345 Q1998.125,340.4 2001.25,345 Q2004.375,349.6 2007.5,345 Q2010.625,340.4 2013.75,345 Q2016.875,349.6 2020.0,345 Q2023.125,340.4 2026.25,345 Q2029.375,349.6 2032.5,345 Q2035.625,340.4 2038.75,345 Q2041.875,349.6 2045.0,345 Q2048.125,340.4 2051.25,345 Q2054.375,349.6 2057.5,345 Q2060.625,340.4 2063.75,345 Q2066.875,349.6 2070.0,345 Q2072.5,340.4 2075.0,345" stroke="#a6d4a6" stroke-width="2.6" fill="none"/>
<text x="1195.0" y="394" font-size="33.33" fill="#080808" stroke="#080808" stroke-width="0.65" font-family='"Liberation Mono",monospace'><tspan font-weight="bold" stroke-width="0.4">}</tspan></text>
<text x="1195.0" y="502" font-size="33.33" fill="#00627a" stroke="#00627a" stroke-width="0.65" font-style="italic" font-family='"Liberation Mono",monospace'>java</text>
<text x="1275.0" y="502" font-size="33.33" fill="#080808" stroke="#080808" stroke-width="0.65" font-family='"Liberation Mono",monospace'> <tspan font-weight="bold" stroke-width="0.4">{</tspan></text>
<rect x="1336" y="474.5" width="385" height="33" rx="6" fill="#f0f0f0"/>
<text x="1349.8" y="499.4" font-size="30" fill="#7b7b7b" stroke="#7b7b7b" stroke-width="0.5" font-family='"Liberation Sans",sans-serif' textLength="357.4" lengthAdjust="spacing" >this: JavaPluginExtension</text>
<text x="1275.0" y="556" font-size="33.33" fill="#871094" stroke="#871094" stroke-width="0.65" font-style="italic" font-family='"Liberation Mono",monospace'>sourceCompatibility</text>
<text x="1655.0" y="556" font-size="33.33" fill="#080808" stroke="#080808" stroke-width="0.65" font-family='"Liberation Mono",monospace'> = JavaVersion.</text>
<text x="1955.0" y="556" font-size="33.33" fill="#871094" stroke="#871094" stroke-width="0.65" font-style="italic" font-family='"Liberation Mono",monospace'>VERSION_17</text>
<rect x="1275.0" y="558.5" width="380.0" height="2" fill="#222" />
<text x="1275.0" y="610" font-size="33.33" fill="#871094" stroke="#871094" stroke-width="0.65" font-style="italic" font-family='"Liberation Mono",monospace'>targetCompatibility</text>
<text x="1655.0" y="610" font-size="33.33" fill="#080808" stroke="#080808" stroke-width="0.65" font-family='"Liberation Mono",monospace'> = JavaVersion.</text>
<text x="1955.0" y="610" font-size="33.33" fill="#871094" stroke="#871094" stroke-width="0.65" font-style="italic" font-family='"Liberation Mono",monospace'>VERSION_17</text>
<rect x="1275.0" y="612.5" width="380.0" height="2" fill="#222" />
<text x="1275.0" y="664" font-size="33.33" fill="#080808" stroke="#080808" stroke-width="0.65" font-family='"Liberation Mono",monospace'>withSourcesJar()</text>
<text x="1195.0" y="718" font-size="33.33" fill="#080808" stroke="#080808" stroke-width="0.65" font-family='"Liberation Mono",monospace'><tspan font-weight="bold" stroke-width="0.4">}</tspan></text>
<text x="1195.0" y="826" font-size="33.33" fill="#0033b3" stroke="#0033b3" stroke-width="0.65" font-family='"Liberation Mono",monospace'>val</text>
<text x="1255.0" y="826" font-size="33.33" fill="#080808" stroke="#080808" stroke-width="0.65" font-family='"Liberation Mono",monospace'> </text>
<text x="1275.0" y="826" font-size="33.33" fill="#871094" stroke="#871094" stroke-width="0.65" font-family='"Liberation Mono",monospace'>zippedConfig</text>
<text x="1515.0" y="826" font-size="33.33" fill="#080808" stroke="#080808" stroke-width="0.65" font-family='"Liberation Mono",monospace'> </text>
<text x="1535.0" y="826" font-size="33.33" fill="#0033b3" stroke="#0033b3" stroke-width="0.65" font-family='"Liberation Mono",monospace'>by</text>
<text x="1575.0" y="826" font-size="33.33" fill="#080808" stroke="#080808" stroke-width="0.65" font-family='"Liberation Mono",monospace'> </text>
<text x="1595.0" y="826" font-size="33.33" fill="#871094" stroke="#871094" stroke-width="0.65" font-style="italic" font-family='"Liberation Mono",monospace'>configurations</text>
<text x="1875.0" y="826" font-size="33.33" fill="#080808" stroke="#080808" stroke-width="0.65" font-family='"Liberation Mono",monospace'>.</text>
<text x="1895.0" y="826" font-size="33.33" fill="#871094" stroke="#871094" stroke-width="0.65" font-style="italic" font-family='"Liberation Mono",monospace'>creating</text>
<path d="M1275.0,831 Q1278.125,826.4 1281.25,831 Q1284.375,835.6 1287.5,831 Q1290.625,826.4 1293.75,831 Q1296.875,835.6 1300.0,831 Q1303.125,826.4 1306.25,831 Q1309.375,835.6 1312.5,831 Q1315.625,826.4 1318.75,831 Q1321.875,835.6 1325.0,831 Q1328.125,826.4 1331.25,831 Q1334.375,835.6 1337.5,831 Q1340.625,826.4 1343.75,831 Q1346.875,835.6 1350.0,831 Q1353.125,826.4 1356.25,831 Q1359.375,835.6 1362.5,831 Q1365.625,826.4 1368.75,831 Q1371.875,835.6 1375.0,831 Q1378.125,826.4 1381.25,831 Q1384.375,835.6 1387.5,831 Q1390.625,826.4 1393.75,831 Q1396.875,835.6 1400.0,831 Q1403.125,826.4 1406.25,831 Q1409.375,835.6 1412.5,831 Q1415.625,826.4 1418.75,831 Q1421.875,835.6 1425.0,831 Q1428.125,826.4 1431.25,831 Q1434.375,835.6 1437.5,831 Q1440.625,826.4 1443.75,831 Q1446.875,835.6 1450.0,831 Q1453.125,826.4 1456.25,831 Q1459.375,835.6 1462.5,831 Q1465.625,826.4 1468.75,831 Q1471.875,835.6 1475.0,831 Q1478.125,826.4 1481.25,831 Q1484.375,835.6 1487.5,831 Q1490.625,826.4 1493.75,831 Q1496.875,835.6 1500.0,831 Q1503.125,826.4 1506.25,831 Q1509.375,835.6 1512.5,831 Q1513.75,826.4 1515.0,831" stroke="#c2c2c2" stroke-width="2.6" fill="none"/>
<text x="1195.0" y="880" font-size="33.33" fill="#00627a" stroke="#00627a" stroke-width="0.65" font-style="italic" font-family='"Liberation Mono",monospace'>dependencies</text>
<text x="1435.0" y="880" font-size="33.33" fill="#080808" stroke="#080808" stroke-width="0.65" font-family='"Liberation Mono",monospace'> <tspan font-weight="bold" stroke-width="0.4">{</tspan></text>
<rect x="1496" y="852.5" width="469" height="33" rx="6" fill="#f0f0f0"/>
<text x="1508.8" y="877.4" font-size="30" fill="#7b7b7b" stroke="#7b7b7b" stroke-width="0.5" font-family='"Liberation Sans",sans-serif' textLength="443.5" lengthAdjust="spacing" >this: DependencyHandlerScope</text>
<text x="1275.0" y="934" font-size="33.33" fill="#8c8c8c" stroke="#8c8c8c" stroke-width="0.65" font-style="italic" font-family='"Liberation Mono",monospace'>//*** phylonco lphy + lphy ***//</text>
<path d="M1395.0,939 Q1398.125,934.4 1401.25,939 Q1404.375,943.6 1407.5,939 Q1410.625,934.4 1413.75,939 Q1416.875,943.6 1420.0,939 Q1423.125,934.4 1426.25,939 Q1429.375,943.6 1432.5,939 Q1435.625,934.4 1438.75,939 Q1441.875,943.6 1445.0,939 Q1448.125,934.4 1451.25,939 Q1454.375,943.6 1457.5,939 Q1460.625,934.4 1463.75,939 Q1466.875,943.6 1470.0,939 Q1473.125,934.4 1476.25,939 Q1479.375,943.6 1482.5,939 Q1485.625,934.4 1488.75,939 Q1491.875,943.6 1495.0,939 Q1498.125,934.4 1501.25,939 Q1504.375,943.6 1507.5,939 Q1510.625,934.4 1513.75,939 Q1516.875,943.6 1520.0,939 Q1523.125,934.4 1526.25,939 Q1529.375,943.6 1532.5,939 Q1535.625,934.4 1538.75,939 Q1541.875,943.6 1545.0,939 Q1548.125,934.4 1551.25,939 Q1553.125,943.6 1555.0,939" stroke="#a6d4a6" stroke-width="2.6" fill="none"/>
<path d="M1575.0,939 Q1578.125,934.4 1581.25,939 Q1584.375,943.6 1587.5,939 Q1590.625,934.4 1593.75,939 Q1596.875,943.6 1600.0,939 Q1603.125,934.4 1606.25,939 Q1609.375,943.6 1612.5,939 Q1615.625,934.4 1618.75,939 Q1621.875,943.6 1625.0,939 Q1628.125,934.4 1631.25,939 Q1634.375,943.6 1637.5,939 Q1640.625,934.4 1643.75,939 Q1646.875,943.6 1650.0,939 Q1652.5,934.4 1655.0,939" stroke="#a6d4a6" stroke-width="2.6" fill="none"/>
<path d="M1715.0,939 Q1718.125,934.4 1721.25,939 Q1724.375,943.6 1727.5,939 Q1730.625,934.4 1733.75,939 Q1736.875,943.6 1740.0,939 Q1743.125,934.4 1746.25,939 Q1749.375,943.6 1752.5,939 Q1755.625,934.4 1758.75,939 Q1761.875,943.6 1765.0,939 Q1768.125,934.4 1771.25,939 Q1774.375,943.6 1777.5,939 Q1780.625,934.4 1783.75,939 Q1786.875,943.6 1790.0,939 Q1792.5,934.4 1795.0,939" stroke="#a6d4a6" stroke-width="2.6" fill="none"/>
<text x="1275.0" y="988" font-size="33.33" fill="#00627a" stroke="#00627a" stroke-width="0.65" font-style="italic" font-family='"Liberation Mono",monospace'>implementation</text>
<text x="1555.0" y="988" font-size="33.33" fill="#080808" stroke="#080808" stroke-width="0.65" font-family='"Liberation Mono",monospace'>(</text>
<rect x="1578.4" y="952.5" width="323.0999999999999" height="45" rx="7" fill="#f0f0f0"/>
<text x="1588.2" y="986" font-size="31" fill="#7b7b7b" stroke="#7b7b7b" stroke-width="0.5" font-family='"Liberation Sans",sans-serif' textLength="302.1" lengthAdjust="spacing" >dependencyNotation:</text>
<text x="1906" y="988" font-size="33.33" fill="#067d17" stroke="#067d17" stroke-width="0.65" font-family='"Liberation Mono",monospace'>&quot;io.github.linguaphylo:lphy:1.2.0&quot;</text>
<text x="2586.0" y="988" font-size="33.33" fill="#080808" stroke="#080808" stroke-width="0.65" font-family='"Liberation Mono",monospace'>)</text>
<path d="M2126.0,993 Q2129.125,988.4 2132.25,993 Q2135.375,997.6 2138.5,993 Q2141.625,988.4 2144.75,993 Q2147.875,997.6 2151.0,993 Q2154.125,988.4 2157.25,993 Q2160.375,997.6 2163.5,993 Q2166.625,988.4 2169.75,993 Q2172.875,997.6 2176.0,993 Q2179.125,988.4 2182.25,993 Q2185.375,997.6 2188.5,993 Q2191.625,988.4 2194.75,993 Q2197.875,997.6 2201.0,993 Q2204.125,988.4 2207.25,993 Q2210.375,997.6 2213.5,993 Q2216.625,988.4 2219.75,993 Q2222.875,997.6 2226.0,993 Q2229.125,988.4 2232.25,993 Q2235.375,997.6 2238.5,993 Q2241.625,988.4 2244.75,993 Q2247.875,997.6 2251.0,993 Q2254.125,988.4 2257.25,993 Q2260.375,997.6 2263.5,993 Q2266.625,988.4 2269.75,993 Q2272.875,997.6 2276.0,993 Q2279.125,988.4 2282.25,993 Q2285.375,997.6 2288.5,993 Q2291.625,988.4 2294.75,993 Q2297.875,997.6 2301.0,993 Q2304.125,988.4 2307.25,993 Q2310.375,997.6 2313.5,993 Q2316.625,988.4 2319.75,993 Q2322.875,997.6 2326.0,993 Q2329.125,988.4 2332.25,993 Q2335.375,997.6 2338.5,993 Q2341.625,988.4 2344.75,993 Q2345.375,997.6 2346.0,993" stroke="#a6d4a6" stroke-width="2.6" fill="none"/>
<path d="M2366.0,993 Q2369.125,988.4 2372.25,993 Q2375.375,997.6 2378.5,993 Q2381.625,988.4 2384.75,993 Q2387.875,997.6 2391.0,993 Q2394.125,988.4 2397.25,993 Q2400.375,997.6 2403.5,993 Q2406.625,988.4 2409.75,993 Q2412.875,997.6 2416.0,993 Q2419.125,988.4 2422.25,993 Q2425.375,997.6 2428.5,993 Q2431.625,988.4 2434.75,993 Q2437.875,997.6 2441.0,993 Q2443.5,988.4 2446.0,993" stroke="#a6d4a6" stroke-width="2.6" fill="none"/>
<text x="1195.0" y="1042" font-size="33.33" fill="#8c8c8c" stroke="#8c8c8c" stroke-width="0.65" font-style="italic" font-family='"Liberation Mono",monospace'>//    implementation(&quot;io.github.bioDS:?:?&quot;)</text>
<text x="1275.0" y="1096" font-size="33.33" fill="#00627a" stroke="#00627a" stroke-width="0.65" font-style="italic" font-family='"Liberation Mono",monospace'>implementation</text>
<text x="1555.0" y="1096" font-size="33.33" fill="#080808" stroke="#080808" stroke-width="0.65" font-family='"Liberation Mono",monospace'>(</text>
<text x="1575.0" y="1096" font-size="33.33" fill="#00627a" stroke="#00627a" stroke-width="0.65" font-style="italic" font-family='"Liberation Mono",monospace'>project</text>
<text x="1715.0" y="1096" font-size="33.33" fill="#080808" stroke="#080808" stroke-width="0.65" font-family='"Liberation Mono",monospace'>(</text>
<rect x="1738.5" y="1060.5" width="92.5" height="45" rx="7" fill="#f0f0f0"/>
<text x="1747.3" y="1094" font-size="31" fill="#7b7b7b" stroke="#7b7b7b" stroke-width="0.5" font-family='"Liberation Sans",sans-serif' textLength="73.5" lengthAdjust="spacing" >path:</text>
<text x="1835" y="1096" font-size="33.33" fill="#067d17" stroke="#067d17" stroke-width="0.65" font-family='"Liberation Mono",monospace'>&quot;:phylonco-lphy&quot;</text>
<text x="2155.0" y="1096" font-size="33.33" fill="#080808" stroke="#080808" stroke-width="0.65" font-family='"Liberation Mono",monospace'>))</text>
<path d="M1875.0,1101 Q1878.125,1096.4 1881.25,1101 Q1884.375,1105.6 1887.5,1101 Q1890.625,1096.4 1893.75,1101 Q1896.875,1105.6 1900.0,1101 Q1903.125,1096.4 1906.25,1101 Q1909.375,1105.6 1912.5,1101 Q1915.625,1096.4 1918.75,1101 Q1921.875,1105.6 1925.0,1101 Q1928.125,1096.4 1931.25,1101 Q1934.375,1105.6 1937.5,1101 Q1940.625,1096.4 1943.75,1101 Q1946.875,1105.6 1950.0,1101 Q1953.125,1096.4 1956.25,1101 Q1959.375,1105.6 1962.5,1101 Q1965.625,1096.4 1968.75,1101 Q1971.875,1105.6 1975.0,1101 Q1978.125,1096.4 1981.25,1101 Q1984.375,1105.6 1987.5,1101 Q1990.625,1096.4 1993.75,1101 Q1996.875,1105.6 2000.0,1101 Q2003.125,1096.4 2006.25,1101 Q2009.375,1105.6 2012.5,1101 Q2015.625,1096.4 2018.75,1101 Q2021.875,1105.6 2025.0,1101 Q2028.125,1096.4 2031.25,1101 Q2033.125,1105.6 2035.0,1101" stroke="#a6d4a6" stroke-width="2.6" fill="none"/>
<path d="M2055.0,1101 Q2058.125,1096.4 2061.25,1101 Q2064.375,1105.6 2067.5,1101 Q2070.625,1096.4 2073.75,1101 Q2076.875,1105.6 2080.0,1101 Q2083.125,1096.4 2086.25,1101 Q2089.375,1105.6 2092.5,1101 Q2095.625,1096.4 2098.75,1101 Q2101.875,1105.6 2105.0,1101 Q2108.125,1096.4 2111.25,1101 Q2114.375,1105.6 2117.5,1101 Q2120.625,1096.4 2123.75,1101 Q2126.875,1105.6 2130.0,1101 Q2132.5,1096.4 2135.0,1101" stroke="#a6d4a6" stroke-width="2.6" fill="none"/>
<text x="1275.0" y="1204" font-size="33.33" fill="#8c8c8c" stroke="#8c8c8c" stroke-width="0.65" font-style="italic" font-family='"Liberation Mono",monospace'>//*** phylonco beast2 + beast2 + beastlab ***//</text>
<path d="M1395.0,1209 Q1398.125,1204.4 1401.25,1209 Q1404.375,1213.6 1407.5,1209 Q1410.625,1204.4 1413.75,1209 Q1416.875,1213.6 1420.0,1209 Q1423.125,1204.4 1426.25,1209 Q1429.375,1213.6 1432.5,1209 Q1435.625,1204.4 1438.75,1209 Q1441.875,1213.6 1445.0,1209 Q1448.125,1204.4 1451.25,1209 Q1454.375,1213.6 1457.5,1209 Q1460.625,1204.4 1463.75,1209 Q1466.875,1213.6 1470.0,1209 Q1473.125,1204.4 1476.25,1209 Q1479.375,1213.6 1482.5,1209 Q1485.625,1204.4 1488.75,1209 Q1491.875,1213.6 1495.0,1209 Q1498.125,1204.4 1501.25,1209 Q1504.375,1213.6 1507.5,1209 Q1510.625,1204.4 1513.75,1209 Q1516.875,1213.6 1520.0,1209 Q1523.125,1204.4 1526.25,1209 Q1529.375,1213.6 1532.5,1209 Q1535.625,1204.4 1538.75,1209 Q1541.875,1213.6 1545.0,1209 Q1548.125,1204.4 1551.25,1209 Q1553.125,1213.6 1555.0,1209" stroke="#a6d4a6" stroke-width="2.6" fill="none"/>
<path d="M1935.0,1209 Q1938.125,1204.4 1941.25,1209 Q1944.375,1213.6 1947.5,1209 Q1950.625,1204.4 1953.75,1209 Q1956.875,1213.6 1960.0,1209 Q1963.125,1204.4 1966.25,1209 Q1969.375,1213.6 1972.5,1209 Q1975.625,1204.4 1978.75,1209 Q1981.875,1213.6 1985.0,1209 Q1988.125,1204.4 1991.25,1209 Q1994.375,1213.6 1997.5,1209 Q2000.625,1204.4 2003.75,1209 Q2006.875,1213.6 2010.0,1209 Q2013.125,1204.4 2016.25,1209 Q2019.375,1213.6 2022.5,1209 Q2025.625,1204.4 2028.75,1209 Q2031.875,1213.6 2035.0,1209 Q2038.125,1204.4 2041.25,1209 Q2044.375,1213.6 2047.5,1209 Q2050.625,1204.4 2053.75,1209 Q2056.875,1213.6 2060.0,1209 Q2063.125,1204.4 2066.25,1209 Q2069.375,1213.6 2072.5,1209 Q2075.625,1204.4 2078.75,1209 Q2081.875,1213.6 2085.0,1209 Q2088.125,1204.4 2091.25,1209 Q2093.125,1213.6 2095.0,1209" stroke="#a6d4a6" stroke-width="2.6" fill="none"/>
<text x="1275.0" y="1258" font-size="33.33" fill="#00627a" stroke="#00627a" stroke-width="0.65" font-style="italic" font-family='"Liberation Mono",monospace'>implementation</text>
<text x="1555.0" y="1258" font-size="33.33" fill="#080808" stroke="#080808" stroke-width="0.65" font-family='"Liberation Mono",monospace'>(</text>
<text x="1575.0" y="1258" font-size="33.33" fill="#00627a" stroke="#00627a" stroke-width="0.65" font-style="italic" font-family='"Liberation Mono",monospace'>project</text>
<text x="1715.0" y="1258" font-size="33.33" fill="#080808" stroke="#080808" stroke-width="0.65" font-family='"Liberation Mono",monospace'>(</text>
<rect x="1738.5" y="1222.5" width="92.5" height="45" rx="7" fill="#f0f0f0"/>
<text x="1747.3" y="1256" font-size="31" fill="#7b7b7b" stroke="#7b7b7b" stroke-width="0.5" font-family='"Liberation Sans",sans-serif' textLength="73.5" lengthAdjust="spacing" >path:</text>
<text x="1835" y="1258" font-size="33.33" fill="#067d17" stroke="#067d17" stroke-width="0.65" font-family='"Liberation Mono",monospace'>&quot;:phylonco-beast&quot;</text>
<text x="2175.0" y="1258" font-size="33.33" fill="#080808" stroke="#080808" stroke-width="0.65" font-family='"Liberation Mono",monospace'>))</text>
<path d="M1875.0,1263 Q1878.125,1258.4 1881.25,1263 Q1884.375,1267.6 1887.5,1263 Q1890.625,1258.4 1893.75,1263 Q1896.875,1267.6 1900.0,1263 Q1903.125,1258.4 1906.25,1263 Q1909.375,1267.6 1912.5,1263 Q1915.625,1258.4 1918.75,1263 Q1921.875,1267.6 1925.0,1263 Q1928.125,1258.4 1931.25,1263 Q1934.375,1267.6 1937.5,1263 Q1940.625,1258.4 1943.75,1263 Q1946.875,1267.6 1950.0,1263 Q1953.125,1258.4 1956.25,1263 Q1959.375,1267.6 1962.5,1263 Q1965.625,1258.4 1968.75,1263 Q1971.875,1267.6 1975.0,1263 Q1978.125,1258.4 1981.25,1263 Q1984.375,1267.6 1987.5,1263 Q1990.625,1258.4 1993.75,1263 Q1996.875,1267.6 2000.0,1263 Q2003.125,1258.4 2006.25,1263 Q2009.375,1267.6 2012.5,1263 Q2015.625,1258.4 2018.75,1263 Q2021.875,1267.6 2025.0,1263 Q2028.125,1258.4 2031.25,1263 Q2033.125,1267.6 2035.0,1263" stroke="#a6d4a6" stroke-width="2.6" fill="none"/>
<text x="1275.0" y="1366" font-size="33.33" fill="#8c8c8c" stroke="#8c8c8c" stroke-width="0.65" font-style="italic" font-family='"Liberation Mono",monospace'>//*** lphybeast + ... ***//</text>
<path d="M1395.0,1371 Q1398.125,1366.4 1401.25,1371 Q1404.375,1375.6 1407.5,1371 Q1410.625,1366.4 1413.75,1371 Q1416.875,1375.6 1420.0,1371 Q1423.125,1366.4 1426.25,1371 Q1429.375,1375.6 1432.5,1371 Q1435.625,1366.4 1438.75,1371 Q1441.875,1375.6 1445.0,1371 Q1448.125,1366.4 1451.25,1371 Q1454.375,1375.6 1457.5,1371 Q1460.625,1366.4 1463.75,1371 Q1466.875,1375.6 1470.0,1371 Q1473.125,1366.4 1476.25,1371 Q1479.375,1375.6 1482.5,1371 Q1485.625,1366.4 1488.75,1371 Q1491.875,1375.6 1495.0,1371 Q1498.125,1366.4 1501.25,1371 Q1504.375,1375.6 1507.5,1371 Q1510.625,1366.4 1513.75,1371 Q1516.875,1375.6 1520.0,1371 Q1523.125,1366.4 1526.25,1371 Q1529.375,1375.6 1532.5,1371 Q1535.625,1366.4 1538.75,1371 Q1541.875,1375.6 1545.0,1371 Q1548.125,1366.4 1551.25,1371 Q1554.375,1375.6 1557.5,1371 Q1560.625,1366.4 1563.75,1371 Q1566.875,1375.6 1570.0,1371 Q1572.5,1366.4 1575.0,1371" stroke="#a6d4a6" stroke-width="2.6" fill="none"/>
<text x="1275.0" y="1420" font-size="33.33" fill="#871094" stroke="#871094" stroke-width="0.65" font-family='"Liberation Mono",monospace'>zippedConfig</text>
<text x="1515.0" y="1420" font-size="33.33" fill="#080808" stroke="#080808" stroke-width="0.65" font-family='"Liberation Mono",monospace'>(</text>
<rect x="1538.5" y="1384.5" width="322.5" height="45" rx="7" fill="#f0f0f0"/>
<text x="1547.3" y="1418" font-size="31" fill="#7b7b7b" stroke="#7b7b7b" stroke-width="0.5" font-family='"Liberation Sans",sans-serif' textLength="303.5" lengthAdjust="spacing" >dependencyNotation:</text>
<text x="1865" y="1420" font-size="33.33" fill="#067d17" stroke="#067d17" stroke-width="0.65" font-family='"Liberation Mono",monospace'>&quot;io.github.linguaphylo:lphybeast:0.3.0&quot;</text>
<text x="2645.0" y="1420" font-size="33.33" fill="#080808" stroke="#080808" stroke-width="0.65" font-family='"Liberation Mono",monospace'>)</text>
<path d="M2085.0,1425 Q2088.125,1420.4 2091.25,1425 Q2094.375,1429.6 2097.5,1425 Q2100.625,1420.4 2103.75,1425 Q2106.875,1429.6 2110.0,1425 Q2113.125,1420.4 2116.25,1425 Q2119.375,1429.6 2122.5,1425 Q2125.625,1420.4 2128.75,1425 Q2131.875,1429.6 2135.0,1425 Q2138.125,1420.4 2141.25,1425 Q2144.375,1429.6 2147.5,1425 Q2150.625,1420.4 2153.75,1425 Q2156.875,1429.6 2160.0,1425 Q2163.125,1420.4 2166.25,1425 Q2169.375,1429.6 2172.5,1425 Q2175.625,1420.4 2178.75,1425 Q2181.875,1429.6 2185.0,1425 Q2188.125,1420.4 2191.25,1425 Q2194.375,1429.6 2197.5,1425 Q2200.625,1420.4 2203.75,1425 Q2206.875,1429.6 2210.0,1425 Q2213.125,1420.4 2216.25,1425 Q2219.375,1429.6 2222.5,1425 Q2225.625,1420.4 2228.75,1425 Q2231.875,1429.6 2235.0,1425 Q2238.125,1420.4 2241.25,1425 Q2244.375,1429.6 2247.5,1425 Q2250.625,1420.4 2253.75,1425 Q2256.875,1429.6 2260.0,1425 Q2263.125,1420.4 2266.25,1425 Q2269.375,1429.6 2272.5,1425 Q2275.625,1420.4 2278.75,1425 Q2281.875,1429.6 2285.0,1425 Q2288.125,1420.4 2291.25,1425 Q2294.375,1429.6 2297.5,1425 Q2300.625,1420.4 2303.75,1425 Q2304.375,1429.6 2305.0,1425" stroke="#a6d4a6" stroke-width="2.6" fill="none"/>
<path d="M2325.0,1425 Q2328.125,1420.4 2331.25,1425 Q2334.375,1429.6 2337.5,1425 Q2340.625,1420.4 2343.75,1425 Q2346.875,1429.6 2350.0,1425 Q2353.125,1420.4 2356.25,1425 Q2359.375,1429.6 2362.5,1425 Q2365.625,1420.4 2368.75,1425 Q2371.875,1429.6 2375.0,1425 Q2378.125,1420.4 2381.25,1425 Q2384.375,1429.6 2387.5,1425 Q2390.625,1420.4 2393.75,1425 Q2396.875,1429.6 2400.0,1425 Q2403.125,1420.4 2406.25,1425 Q2409.375,1429.6 2412.5,1425 Q2415.625,1420.4 2418.75,1425 Q2421.875,1429.6 2425.0,1425 Q2428.125,1420.4 2431.25,1425 Q2434.375,1429.6 2437.5,1425 Q2440.625,1420.4 2443.75,1425 Q2446.875,1429.6 2450.0,1425 Q2453.125,1420.4 2456.25,1425 Q2459.375,1429.6 2462.5,1425 Q2465.625,1420.4 2468.75,1425 Q2471.875,1429.6 2475.0,1425 Q2478.125,1420.4 2481.25,1425 Q2484.375,1429.6 2487.5,1425 Q2490.625,1420.4 2493.75,1425 Q2496.875,1429.6 2500.0,1425 Q2502.5,1420.4 2505.0,1425" stroke="#a6d4a6" stroke-width="2.6" fill="none"/>
<text x="1275.0" y="1474" font-size="33.33" fill="#00627a" stroke="#00627a" stroke-width="0.65" font-style="italic" font-family='"Liberation Mono",monospace'>implementation</text>
<text x="1555.0" y="1474" font-size="33.33" fill="#080808" stroke="#080808" stroke-width="0.65" font-family='"Liberation Mono",monospace'>(files( <tspan font-weight="bold" stroke-width="0.4">{</tspan> </text>
<text x="1755.0" y="1474" font-size="33.33" fill="#871094" stroke="#871094" stroke-width="0.65" font-family='"Liberation Mono",monospace'>lb</text>
<text x="1795.0" y="1474" font-size="33.33" fill="#080808" stroke="#080808" stroke-width="0.65" font-family='"Liberation Mono",monospace'>.get().</text>
<text x="1935.0" y="1474" font-size="33.33" fill="#871094" stroke="#871094" stroke-width="0.65" font-style="italic" font-family='"Liberation Mono",monospace'>extra</text>
<text x="2035.0" y="1474" font-size="33.33" fill="#080808" stroke="#080808" stroke-width="0.65" font-family='"Liberation Mono",monospace'>[</text>
<text x="2055.0" y="1474" font-size="33.33" fill="#067d17" stroke="#067d17" stroke-width="0.65" font-family='"Liberation Mono",monospace'>&quot;lblibs&quot;</text>
<text x="2215.0" y="1474" font-size="33.33" fill="#080808" stroke="#080808" stroke-width="0.65" font-family='"Liberation Mono",monospace'>] <tspan font-weight="bold" stroke-width="0.4">}</tspan> ))</text>
<path d="M2075.0,1479 Q2078.125,1474.4 2081.25,1479 Q2084.375,1483.6 2087.5,1479 Q2090.625,1474.4 2093.75,1479 Q2096.875,1483.6 2100.0,1479 Q2103.125,1474.4 2106.25,1479 Q2109.375,1483.6 2112.5,1479 Q2115.625,1474.4 2118.75,1479 Q2121.875,1483.6 2125.0,1479 Q2128.125,1474.4 2131.25,1479 Q2134.375,1483.6 2137.5,1479 Q2140.625,1474.4 2143.75,1479 Q2146.875,1483.6 2150.0,1479 Q2153.125,1474.4 2156.25,1479 Q2159.375,1483.6 2162.5,1479 Q2165.625,1474.4 2168.75,1479 Q2171.875,1483.6 2175.0,1479 Q2178.125,1474.4 2181.25,1479 Q2184.375,1483.6 2187.5,1479 Q2190.625,1474.4 2193.75,1479 Q2194.375,1483.6 2195.0,1479" stroke="#a6d4a6" stroke-width="2.6" fill="none"/>
<text x="1275.0" y="1582" font-size="33.33" fill="#00627a" stroke="#00627a" stroke-width="0.65" font-style="italic" font-family='"Liberation Mono",monospace'>implementation</text>
<text x="1555.0" y="1582" font-size="33.33" fill="#080808" stroke="#080808" stroke-width="0.65" font-family='"Liberation Mono",monospace'>(fileTree(</text>
<rect x="1758.5" y="1546.5" width="136.5" height="45" rx="7" fill="#f0f0f0"/>
<text x="1767.8" y="1580" font-size="31" fill="#7b7b7b" stroke="#7b7b7b" stroke-width="0.5" font-family='"Liberation Sans",sans-serif' textLength="117" lengthAdjust="spacing" >baseDir:</text>
<text x="1899.5" y="1582" font-size="33.33" fill="#067d17" stroke="#067d17" stroke-width="0.65" font-family='"Liberation Mono",monospace'>&quot;lib&quot;</text>
<text x="1999.5" y="1582" font-size="33.33" fill="#080808" stroke="#080808" stroke-width="0.65" font-family='"Liberation Mono",monospace'>) <tspan font-weight="bold" stroke-width="0.4">{</tspan></text>
<rect x="2082.5" y="1554.5" width="392.5" height="33" rx="6" fill="#f0f0f0"/>
<text x="2095.3" y="1579.4" font-size="30" fill="#7b7b7b" stroke="#7b7b7b" stroke-width="0.5" font-family='"Liberation Sans",sans-serif' textLength="366.5" lengthAdjust="spacing" >this: ConfigurableFileTree</text>
<text x="1195.0" y="1636" font-size="33.33" fill="#8c8c8c" stroke="#8c8c8c" stroke-width="0.65" font-style="italic" font-family='"Liberation Mono",monospace'>//        include(&quot;lphy-*-all.jar&quot;)</text>
<path d="M1575.0,1641 Q1578.125,1636.4 1581.25,1641 Q1584.375,1645.6 1587.5,1641 Q1590.625,1636.4 1593.75,1641 Q1596.875,1645.6 1600.0,1641 Q1603.125,1636.4 1606.25,1641 Q1609.375,1645.6 1612.5,1641 Q1615.625,1636.4 1618.75,1641 Q1621.875,1645.6 1625.0,1641 Q1628.125,1636.4 1631.25,1641 Q1634.375,1645.6 1637.5,1641 Q1640.625,1636.4 1643.75,1641 Q1646.875,1645.6 1650.0,1641 Q1652.5,1636.4 1655.0,1641" stroke="#a6d4a6" stroke-width="2.6" fill="none"/>
<text x="1355.0" y="1690" font-size="33.33" fill="#8c8c8c" stroke="#8c8c8c" stroke-width="0.65" font-style="italic" font-family='"Liberation Mono",monospace'>// beast2 + beastlab are in subproject beast2</text>
<path d="M1595.0,1695 Q1598.125,1690.4 1601.25,1695 Q1604.375,1699.6 1607.5,1695 Q1610.625,1690.4 1613.75,1695 Q1616.875,1699.6 1620.0,1695 Q1623.125,1690.4 1626.25,1695 Q1629.375,1699.6 1632.5,1695 Q1635.625,1690.4 1638.75,1695 Q1641.875,1699.6 1645.0,1695 Q1648.125,1690.4 1651.25,1695 Q1654.375,1699.6 1657.5,1695 Q1660.625,1690.4 1663.75,1695 Q1666.875,1699.6 1670.0,1695 Q1673.125,1690.4 1676.25,1695 Q1679.375,1699.6 1682.5,1695 Q1685.625,1690.4 1688.75,1695 Q1691.875,1699.6 1695.0,1695 Q1698.125,1690.4 1701.25,1695 Q1704.375,1699.6 1707.5,1695 Q1710.625,1690.4 1713.75,1695 Q1716.875,1699.6 1720.0,1695 Q1723.125,1690.4 1726.25,1695 Q1729.375,1699.6 1732.5,1695 Q1735.625,1690.4 1738.75,1695 Q1741.875,1699.6 1745.0,1695 Q1748.125,1690.4 1751.25,1695 Q1753.125,1699.6 1755.0,1695" stroke="#a6d4a6" stroke-width="2.6" fill="none"/>
<text x="1355.0" y="1744" font-size="33.33" fill="#080808" stroke="#080808" stroke-width="0.65" font-family='"Liberation Mono",monospace'>include(</text>
<rect x="1518.5" y="1708.5" width="176.5" height="45" rx="7" fill="#f0f0f0"/>
<text x="1527.3" y="1742" font-size="31" fill="#7b7b7b" stroke="#7b7b7b" stroke-width="0.5" font-family='"Liberation Sans",sans-serif' textLength="157.5" lengthAdjust="spacing" >...includes:</text>
<text x="1699" y="1744" font-size="33.33" fill="#067d17" stroke="#067d17" stroke-width="0.65" font-family='"Liberation Mono",monospace'>&quot;*addon*.jar&quot;</text>
<text x="1959.0" y="1744" font-size="33.33" fill="#080808" stroke="#080808" stroke-width="0.65" font-family='"Liberation Mono",monospace'>, </text>
<text x="1999.0" y="1744" font-size="33.33" fill="#067d17" stroke="#067d17" stroke-width="0.65" font-family='"Liberation Mono",monospace'>&quot;feast-*.jar&quot;</text>
<text x="2259.0" y="1744" font-size="33.33" fill="#080808" stroke="#080808" stroke-width="0.65" font-family='"Liberation Mono",monospace'>, </text>
<text x="2299.0" y="1744" font-size="33.33" fill="#067d17" stroke="#067d17" stroke-width="0.65" font-family='"Liberation Mono",monospace'>&quot;Mascot.*.jar&quot;</text>
<text x="2579.0" y="1744" font-size="33.33" fill="#080808" stroke="#080808" stroke-width="0.65" font-family='"Liberation Mono",monospace'>, </text>
<text x="2619.0" y="1744" font-size="33.33" fill="#067d17" stroke="#067d17" stroke-width="0.65" font-family='"Liberation Mono",monospace'>&quot;SA.*.jar&quot;</text>
<text x="2819.0" y="1744" font-size="33.33" fill="#080808" stroke="#080808" stroke-width="0.65" font-family='"Liberation Mono",monospace'>, </text>
<text x="2859.0" y="1744" font-size="33.33" fill="#067d17" stroke="#067d17" stroke-width="0.65" font-family='"Liberation Mono",monospace'>&quot;SSM.*.jar&quot;</text>
<text x="3079.0" y="1744" font-size="33.33" fill="#080808" stroke="#080808" stroke-width="0.65" font-family='"Liberation Mono",monospace'>)</text>
<text x="1275.0" y="1798" font-size="33.33" fill="#080808" stroke="#080808" stroke-width="0.65" font-family='"Liberation Mono",monospace'><tspan font-weight="bold" stroke-width="0.4">}</tspan>)</text>
<text x="1275.0" y="1906" font-size="33.33" fill="#8c8c8c" stroke="#8c8c8c" stroke-width="0.65" font-style="italic" font-family='"Liberation Mono",monospace'>// tests</text>
<text x="1275.0" y="1960" font-size="33.33" fill="#00627a" stroke="#00627a" stroke-width="0.65" font-style="italic" font-family='"Liberation Mono",monospace'>testImplementation</text>
<text x="1635.0" y="1960" font-size="33.33" fill="#080808" stroke="#080808" stroke-width="0.65" font-family='"Liberation Mono",monospace'>(</text>
<rect x="1658.5" y="1924.5" width="322.5" height="45" rx="7" fill="#f0f0f0"/>
<text x="1667.8" y="1958" font-size="31" fill="#7b7b7b" stroke="#7b7b7b" stroke-width="0.5" font-family='"Liberation Sans",sans-serif' textLength="303" lengthAdjust="spacing" >dependencyNotation:</text>
<text x="1985" y="1960" font-size="33.33" fill="#067d17" stroke="#067d17" stroke-width="0.65" font-family='"Liberation Mono",monospace'>&quot;junit:junit:4.13.2&quot;</text>
<text x="2385.0" y="1960" font-size="33.33" fill="#080808" stroke="#080808" stroke-width="0.65" font-family='"Liberation Mono",monospace'>)</text>
<text x="1195.0" y="2014" font-size="33.33" fill="#080808" stroke="#080808" stroke-width="0.65" font-family='"Liberation Mono",monospace'><tspan font-weight="bold" stroke-width="0.4">}</tspan></text>
<text x="1195.0" y="2068" font-size="33.33" fill="#871094" stroke="#871094" stroke-width="0.65" font-style="italic" font-family='"Liberation Mono",monospace'>tasks</text>
<text x="1295.0" y="2068" font-size="33.33" fill="#080808" stroke="#080808" stroke-width="0.65" font-family='"Liberation Mono",monospace'>.</text>
<text x="1315.0" y="2068" font-size="33.33" fill="#871094" stroke="#871094" stroke-width="0.65" font-style="italic" font-family='"Liberation Mono",monospace'>compileJava</text>
<text x="1535.0" y="2068" font-size="33.33" fill="#080808" stroke="#080808" stroke-width="0.65" font-family='"Liberation Mono",monospace'>.get().dependsOn(</text>
<rect x="1878.5" y="2032.5" width="139.0" height="45" rx="7" fill="#f0f0f0"/>
<text x="1886.3" y="2066" font-size="31" fill="#7b7b7b" stroke="#7b7b7b" stroke-width="0.5" font-family='"Liberation Sans",sans-serif' textLength="119.5" lengthAdjust="spacing" >...paths:</text>
<text x="2021.5" y="2068" font-size="33.33" fill="#067d17" stroke="#067d17" stroke-width="0.65" font-family='"Liberation Mono",monospace'>&quot;installLPhyBEAST&quot;</text>
<text x="2381.5" y="2068" font-size="33.33" fill="#080808" stroke="#080808" stroke-width="0.65" font-family='"Liberation Mono",monospace'>)</text>
<path d="M3119.5,282 L3133,309 L3106,309 Z" fill="#d9c9a0"/>
<rect x="3118" y="290" width="3" height="11" fill="#fff" />
<rect x="3118" y="303" width="3" height="3" fill="#fff" />
<rect x="3114" y="372" width="18" height="363" rx="9" fill="#c9c9c9"/>
<rect x="3091" y="404" width="7" height="13.5" fill="#c8c8c8" />
<rect x="3091" y="480" width="7" height="14" fill="#c8c8c8" />
<rect x="3091" y="602.5" width="7" height="12.5" fill="#c8c8c8" />
<rect x="3091" y="714" width="7" height="13.5" fill="#c8c8c8" />
<rect x="3091" y="615" width="7" height="12.5" fill="#b3d4f5" />
<rect x="3104" y="472.5" width="36" height="5" fill="#d9cfa9" />
<rect x="3104" y="782" width="36" height="65.5" fill="#d9cfa9" />
<rect x="3104" y="958" width="36" height="5" fill="#d9cfa9" />
<rect x="3104" y="1311.5" width="36" height="6" fill="#5aaee8" />
<rect x="3104" y="1666.5" width="36" height="6" fill="#d9cfa9" />
<rect x="3104" y="1687.5" width="36" height="6" fill="#d9cfa9" />
</g>
<rect x="112" y="2098" width="3080" height="1.8" fill="#c9c9c9" />
<rect x="112" y="2100" width="3080" height="51" fill="#f2f2f2" />
<rect x="191" y="2115.5" width="5" height="4.5" fill="#6e6e6e" />
<rect x="199" y="2115.5" width="17" height="4.5" fill="#6e6e6e" />
<rect x="191" y="2123.5" width="5" height="4.5" fill="#6e6e6e" />
<rect x="199" y="2123.5" width="17" height="4.5" fill="#6e6e6e" />
<rect x="191" y="2131.5" width="5" height="4.5" fill="#6e6e6e" />
<rect x="199" y="2131.5" width="17" height="4.5" fill="#6e6e6e" />
<text x="226.8" y="2138" font-size="28" fill="#1a1a1a" stroke="#1a1a1a" stroke-width="0.5" font-family='"Liberation Sans",sans-serif' textLength="81.9" lengthAdjust="spacing" >TODO</text>
<path d="M376,2111 L391,2119 L376,2127 L361,2119 Z" fill="#6e6e6e"/>
<path d="M362,2124 L376,2132 L390,2124 M362,2131 L376,2139 L390,2131" stroke="#6e6e6e" stroke-width="3" fill="none"/>
<text x="402.5" y="2138" font-size="28" fill="#1a1a1a" stroke="#1a1a1a" stroke-width="0.5" font-family='"Liberation Sans",sans-serif' textLength="186.2" lengthAdjust="spacing" >Dependencies</text>
<path d="M668,2118 A12,12 0 1 0 656,2136" stroke="#6e6e6e" stroke-width="3" fill="none"/><path d="M656,2118 L656,2126 L652,2130" stroke="#6e6e6e" stroke-width="2.5" fill="none"/>
<path d="M659,2122 L676,2132 L659,2142 Z" fill="#6e6e6e"/>
<text x="684.8" y="2138" font-size="28" fill="#1a1a1a" stroke="#1a1a1a" stroke-width="0.5" font-family='"Liberation Sans",sans-serif' textLength="97.4" lengthAdjust="spacing" >Profiler</text>
<circle cx="848" cy="2124" r="13" fill="#6e6e6e"/>
<rect x="846" y="2115" width="4.5" height="11" fill="#f2f2f2" />
<rect x="846" y="2129" width="4.5" height="4.5" fill="#f2f2f2" />
<text x="872.8" y="2138" font-size="28" fill="#1a1a1a" stroke="#1a1a1a" stroke-width="0.5" font-family='"Liberation Sans",sans-serif' textLength="124.4" lengthAdjust="spacing" >Problems</text>
<circle cx="1055" cy="2113" r="4.5" fill="#6e6e6e"/><circle cx="1068" cy="2121" r="4.5" fill="#6e6e6e"/><circle cx="1055" cy="2140" r="4.5" fill="#6e6e6e"/>
<path d="M1055,2113 L1055,2140 M1068,2121 C1068,2130 1056,2129 1055,2136" stroke="#6e6e6e" stroke-width="3.5" fill="none"/>
<text x="1086.3" y="2138" font-size="28" fill="#1a1a1a" stroke="#1a1a1a" stroke-width="0.5" font-family='"Liberation Sans",sans-serif' textLength="39.9" lengthAdjust="spacing" >Git</text>
<rect x="1176" y="2113" width="28" height="24" fill="#6e6e6e" />
<path d="M1180,2117 L1186,2123 L1180,2129" stroke="#f2f2f2" stroke-width="2.5" fill="none"/>
<rect x="1189" y="2130" width="9" height="2.5" fill="#f2f2f2" />
<text x="1214.8" y="2138" font-size="28" fill="#1a1a1a" stroke="#1a1a1a" stroke-width="0.5" font-family='"Liberation Sans",sans-serif' textLength="118.9" lengthAdjust="spacing" >Terminal</text>
<circle cx="2958.4" cy="2126.1" r="16.3" fill="#5fa86a"/>
<rect x="2958.4" y="2126.1" width="16.3" height="16.1" fill="#5fa86a" />
<text x="2951.5" y="2135.5" font-size="25" fill="#fff" stroke="#fff" stroke-width="0.3" font-family='"Liberation Sans",sans-serif' font-weight="bold" >1</text>
<text x="2983.8" y="2138" font-size="28" fill="#1a1a1a" stroke="#1a1a1a" stroke-width="0.5" font-family='"Liberation Sans",sans-serif' textLength="129.4" lengthAdjust="spacing" >Event Log</text>
<rect x="112" y="2151" width="3080" height="1.8" fill="#c9c9c9" />
<rect x="134" y="2163" width="22" height="22" fill="none" stroke="#6e6e6e" stroke-width="2.2"/><path d="M128,2169 L128,2192 L151,2192" stroke="#6e6e6e" stroke-width="2.2" fill="none"/>
<text x="188.3" y="2187.5" font-size="28" fill="#1a1a1a" stroke="#1a1a1a" stroke-width="0.5" font-family='"Liberation Sans",sans-serif' textLength="2193.9" lengthAdjust="spacing" >Download pre-built shared indexes: Reduce the indexing time and CPU load with pre-built JDK and Maven library shared indexes // Always dow... (today 10:28 AM)</text>
<text x="2494.8" y="2187.5" font-size="28" fill="#1a1a1a" stroke="#1a1a1a" stroke-width="0.5" font-family='"Liberation Sans",sans-serif' textLength="59.9" lengthAdjust="spacing" >14:1</text>
<text x="2584.8" y="2187.5" font-size="28" fill="#1a1a1a" stroke="#1a1a1a" stroke-width="0.5" font-family='"Liberation Sans",sans-serif' textLength="31.4" lengthAdjust="spacingAndGlyphs" >LF</text>
<text x="2647.3" y="2187.5" font-size="28" fill="#1a1a1a" stroke="#1a1a1a" stroke-width="0.5" font-family='"Liberation Sans",sans-serif' textLength="84.9" lengthAdjust="spacing" >UTF-8</text>
<text x="2763.8" y="2187.5" font-size="28" fill="#1a1a1a" stroke="#1a1a1a" stroke-width="0.5" font-family='"Liberation Sans",sans-serif' textLength="115.9" lengthAdjust="spacing" >4 spaces</text>
<circle cx="2921" cy="2165" r="4" fill="#6e6e6e"/><circle cx="2937" cy="2166" r="4" fill="#6e6e6e"/><circle cx="2921" cy="2190" r="4" fill="#6e6e6e"/>
<path d="M2921,2165 L2921,2190 M2937,2166 C2937,2178 2922,2176 2921,2186" stroke="#6e6e6e" stroke-width="3.2" fill="none"/>
<text x="2953.8" y="2187.5" font-size="28" fill="#1a1a1a" stroke="#1a1a1a" stroke-width="0.5" font-family='"Liberation Sans",sans-serif' textLength="92.4" lengthAdjust="spacing" >master</text>
<path d="M3074.5,2175 L3074.5,2170 A6.3,6.3 0 0 1 3087.1,2170 L3087.1,2175" stroke="#6e6e6e" stroke-width="3.2" fill="none"/>
<rect x="3080.2" y="2175.6" width="19.8" height="14.9" fill="#6e6e6e" />
<path d="M3131,2178 C3128,2170 3136,2163 3143,2166 C3147,2159 3160,2160 3161,2170 C3166,2171 3167,2178 3162,2181 L3135,2181 C3132,2181 3131,2180 3131,2178 Z" fill="#6e6e6e"/>
<text x="3142" y="2180" font-size="22" fill="#f2f2f2" stroke="#f2f2f2" stroke-width="0.3" font-family='"Liberation Sans",sans-serif' font-weight="bold" >?</text>
<polygon points="3156.8,2180.5 3157.1,2177.7 3160.9,2177.7 3161.2,2180.5 3162.7,2181.3 3165.2,2180.2 3167.1,2183.5 3164.9,2185.2 3164.9,2186.8 3167.1,2188.5 3165.2,2191.8 3162.7,2190.7 3161.2,2191.5 3160.9,2194.3 3157.1,2194.3 3156.8,2191.5 3155.3,2190.7 3152.8,2191.8 3150.9,2188.5 3153.1,2186.8 3153.1,2185.2 3150.9,2183.5 3152.8,2180.2 3155.3,2181.3" fill="#6e6e6e" stroke="#6e6e6e" stroke-width="1" stroke-linejoin="round"/>
<circle cx="3159" cy="2186" r="6.12" fill="#6e6e6e"/>
<circle cx="3159" cy="2186" r="3.4000000000000004" fill="#f2f2f2"/>
</g>
</svg></body></html>
